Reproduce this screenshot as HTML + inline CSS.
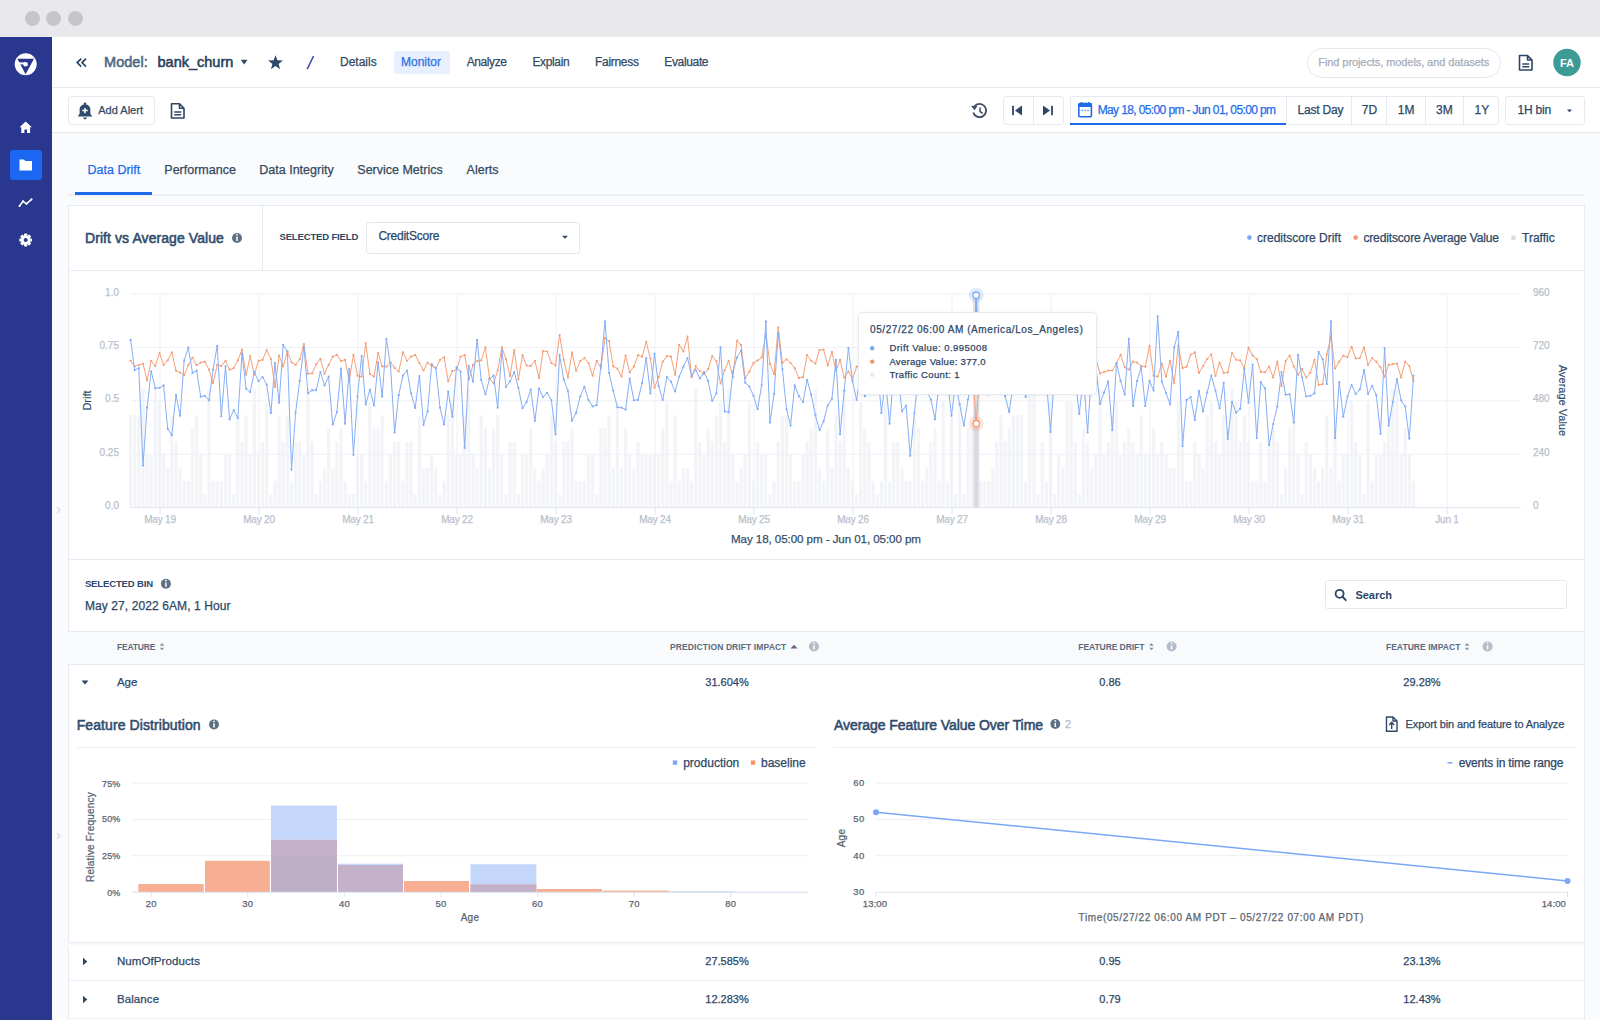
<!DOCTYPE html>
<html><head><meta charset="utf-8">
<style>
*{box-sizing:border-box;margin:0;padding:0}
html,body{width:1600px;height:1020px;overflow:hidden;background:#fafbfc;font-family:"Liberation Sans",sans-serif;color:#2d4767}
.a{position:absolute}
.t{position:absolute;line-height:1;white-space:nowrap;-webkit-text-stroke:0.25px currentColor}
.b{font-weight:700;-webkit-text-stroke:0}
.md{-webkit-text-stroke:0.55px currentColor}
svg{position:absolute;overflow:visible}
</style></head><body>
<!-- browser chrome -->
<div class="a" style="left:0;top:0;width:1600px;height:37px;background:#e9e9eb"></div>
<div class="a" style="left:25px;top:11px;width:15px;height:15px;border-radius:50%;background:#c6c6c8"></div>
<div class="a" style="left:46px;top:11px;width:15px;height:15px;border-radius:50%;background:#c6c6c8"></div>
<div class="a" style="left:68px;top:11px;width:15px;height:15px;border-radius:50%;background:#c6c6c8"></div>

<!-- sidebar -->
<div class="a" style="left:0;top:37px;width:52px;height:983px;background:#29378e"></div>
<!-- HEADER -->
<div class="a" style="left:52px;top:37px;width:1548px;height:51px;background:#fff;border-bottom:1px solid #e4e8ef"></div>
<!-- TOOLBAR -->
<div class="a" style="left:52px;top:88px;width:1548px;height:45px;background:#fff;border-bottom:1px solid #e4e8ef"></div>

<!-- TABS -->
<div class="a" style="left:68px;top:193.5px;width:1516px;height:2px;background:#eceef3"></div>
<div class="a" style="left:75px;top:192px;width:77px;height:3px;background:#1f6bea"></div>


<!-- sidebar icons -->
<svg style="left:0;top:0" width="52" height="260" viewBox="0 0 52 260">
 <circle cx="25.7" cy="64.2" r="11" fill="#fff"/>
 <path d="M17.4 58.8 H34 L25.6 74.2 Z" fill="#29378e"/>
 <path d="M18.6 63.4 H25.6" stroke="#fff" stroke-width="2"/>
 <circle cx="25.6" cy="64.3" r="2.3" fill="#fff"/>
 <path d="M25.7 121.5 L19.5 127.3 H21.3 V133 H24.4 V129.4 H27 V133 H30.1 V127.3 H31.9 Z" fill="#fff"/>
 <rect x="10" y="150" width="32" height="30" rx="3" fill="#1b67f1"/>
 <path d="M19.5 159.6 H24 L25.5 161 H32 V170.4 H19.5 Z" fill="#fff"/>
 <path d="M19.5 206 L23 201.3 L26.5 203.8 L31.5 199.3" stroke="#fff" stroke-width="1.6" fill="none"/>
 <circle cx="19.5" cy="206" r="1.1" fill="#fff"/><circle cx="23" cy="201.3" r="1.1" fill="#fff"/><circle cx="26.5" cy="203.8" r="1.1" fill="#fff"/><circle cx="31.5" cy="199.3" r="1.1" fill="#fff"/>
 <g transform="translate(25.7 240)" fill="#fff">
  <circle r="4.6"/>
  <rect x="-1.6" y="-6.4" width="3.2" height="12.8" rx="0.6"/>
  <rect x="-1.6" y="-6.4" width="3.2" height="12.8" rx="0.6" transform="rotate(45)"/>
  <rect x="-1.6" y="-6.4" width="3.2" height="12.8" rx="0.6" transform="rotate(90)"/>
  <rect x="-1.6" y="-6.4" width="3.2" height="12.8" rx="0.6" transform="rotate(135)"/>
 </g>
 <circle cx="25.7" cy="240" r="2" fill="#29378e"/>
</svg>

<!-- header content -->
<svg style="left:0;top:0" width="1600" height="140" viewBox="0 0 1600 140">
 <path d="M81.2 58.6 L77.2 62.6 L81.2 66.6 M86 58.6 L82 62.6 L86 66.6" stroke="#2d4767" stroke-width="1.7" fill="none"/>
 <path d="M240.8 59.8 H247.6 L244.2 64.4 Z" fill="#2d4767"/>
 <path d="M275.5 55.2 L277.4 60.3 L282.9 60.5 L278.6 63.9 L280.1 69.2 L275.5 66.1 L270.9 69.2 L272.4 63.9 L268.1 60.5 L273.6 60.3 Z" fill="#2c4a6b"/>
 <path d="M313.6 56 L307.2 69.2" stroke="#3b45a8" stroke-width="1.5"/>
 <!-- doc icon header -->
 <path d="M1519.5 55.5 H1527.5 L1532 60 V70 H1519.5 Z M1527.5 55.5 V60 H1532" stroke="#2d4767" stroke-width="1.6" fill="none" stroke-linejoin="round"/>
 <path d="M1522.3 64 H1529.2 M1522.3 66.8 H1529.2" stroke="#2d4767" stroke-width="1.4"/>
 <circle cx="1567" cy="62.5" r="13.7" fill="#3d9a94"/>
 <!-- toolbar: bell -->
 <path d="M77.8 116.6 H92.2 L90.4 113.8 V110.2 C90.4 106.7 88.4 104.5 85 104.3 C81.6 104.5 79.6 106.7 79.6 110.2 V113.8 Z" fill="#2c4a6b"/>
 <circle cx="85" cy="103.8" r="1.3" fill="#2c4a6b"/>
 <path d="M83.2 117.6 A1.8 1.8 0 0 0 86.8 117.6 Z" fill="#2c4a6b"/>
 <path d="M85 107.9 V113.3 M82.3 110.6 H87.7" stroke="#fff" stroke-width="1.5"/>
 <!-- toolbar doc -->
 <path d="M171.5 103.8 H179.5 L184 108.3 V118 H171.5 Z M179.5 103.8 V108.3 H184" stroke="#2d4767" stroke-width="1.6" fill="none" stroke-linejoin="round"/>
 <path d="M174.3 112 H181.2 M174.3 114.8 H181.2" stroke="#2d4767" stroke-width="1.4"/>
 <!-- history icon -->
 <path d="M974.3 106.5 A6.6 6.6 0 1 1 973.2 112.5" stroke="#3d4f63" stroke-width="1.8" fill="none"/>
 <path d="M971 106 L974.6 110.2 L977.6 105.8 Z" fill="#3d4f63"/>
 <path d="M980 107.5 V111.5 L982.8 113.3" stroke="#3d4f63" stroke-width="1.5" fill="none"/>
 <!-- prev/next -->
 <path d="M1013 105.7 V115.3" stroke="#2d4767" stroke-width="1.8"/>
 <path d="M1022 105.5 L1015 110.5 L1022 115.5 Z" fill="#2d4767"/>
 <path d="M1052 105.7 V115.3" stroke="#2d4767" stroke-width="1.8"/>
 <path d="M1043 105.5 L1050 110.5 L1043 115.5 Z" fill="#2d4767"/>
 <!-- calendar -->
 <rect x="1078.8" y="103.6" width="12.6" height="13.2" rx="1.2" stroke="#1f6bea" stroke-width="1.6" fill="none"/>
 <rect x="1078.8" y="103.6" width="12.6" height="3.4" fill="#1f6bea"/>
 <path d="M1081.5 102 V104.5 M1088.7 102 V104.5" stroke="#1f6bea" stroke-width="1.5"/>
 <path d="M1081.5 110.3 H1082.7 M1084.5 110.3 H1085.7 M1087.5 110.3 H1088.7" stroke="#1f6bea" stroke-width="1.3"/>
 <!-- 1H bin caret -->
 <path d="M1567 109.5 H1572 L1569.5 112.2 Z" fill="#2d4767"/>
</svg>
<div class="t md" style="left:104px;top:55px;font-size:14.5px;color:#4d6885;letter-spacing:0.05px">Model:</div>
<div class="t md" style="left:157.5px;top:55px;font-size:14.5px;color:#263f5d;letter-spacing:0px">bank_churn</div>
<div class="t" style="left:340px;top:56px;font-size:12px;color:#34495f">Details</div>
<div class="a" style="left:394px;top:51px;width:56px;height:23px;background:#e8f0fd;border-radius:3px"></div>
<div class="t" style="left:401px;top:56px;font-size:12px;color:#2f6fe4">Monitor</div>
<div class="t" style="left:466.7px;top:56px;font-size:12px;color:#34495f;letter-spacing:-0.4px">Analyze</div>
<div class="t" style="left:532.4px;top:56px;font-size:12px;color:#34495f;letter-spacing:-0.35px">Explain</div>
<div class="t" style="left:595px;top:56px;font-size:12px;color:#34495f;letter-spacing:-0.3px">Fairness</div>
<div class="t" style="left:664.3px;top:56px;font-size:12px;color:#34495f;letter-spacing:-0.35px">Evaluate</div>
<div class="a" style="left:1307px;top:48px;width:194px;height:30px;border:1px solid #e3e7ee;border-radius:15px"></div>
<div class="t" style="left:1318.3px;top:56.5px;font-size:11px;color:#a5aebb;letter-spacing:-0.08px">Find projects, models, and datasets</div>
<div class="t b" style="left:1556px;top:57.5px;font-size:11px;color:#fff;width:22px;text-align:center">FA</div>

<div class="a" style="left:68px;top:96px;width:87px;height:29px;border:1px solid #e6e9ef;border-radius:3px"></div>
<div class="t" style="left:98.2px;top:104.5px;font-size:11px;color:#2d4767;letter-spacing:0.02px">Add Alert</div>
<div class="a" style="left:1002.5px;top:96.4px;width:61px;height:28.5px;border:1px solid #e6e9ef;border-radius:3px"></div>
<div class="a" style="left:1032.5px;top:96.4px;width:1px;height:28.5px;background:#e6e9ef"></div>
<div class="a" style="left:1070px;top:96.4px;width:429px;height:28.5px;border:1px solid #e6e9ef;border-radius:3px"></div>
<div class="a" style="left:1070px;top:122.5px;width:216px;height:2.2px;background:#1f6bea"></div>
<div class="a" style="left:1286px;top:96.4px;width:1px;height:28.5px;background:#e6e9ef"></div>
<div class="a" style="left:1350.5px;top:96.4px;width:1px;height:28.5px;background:#e6e9ef"></div>
<div class="a" style="left:1386px;top:96.4px;width:1px;height:28.5px;background:#e6e9ef"></div>
<div class="a" style="left:1424.5px;top:96.4px;width:1px;height:28.5px;background:#e6e9ef"></div>
<div class="a" style="left:1463px;top:96.4px;width:1px;height:28.5px;background:#e6e9ef"></div>
<div class="a" style="left:1505px;top:96.4px;width:79.5px;height:28.5px;border:1px solid #e6e9ef;border-radius:3px"></div>
<div class="t" style="left:1097.7px;top:104px;font-size:12px;color:#1f6bea;letter-spacing:-0.62px">May 18, 05:00 pm - Jun 01, 05:00 pm</div>
<div class="t" style="left:1297.5px;top:104px;font-size:12px;color:#2d4767;letter-spacing:-0.2px">Last Day</div>
<div class="t" style="left:1361.8px;top:104px;font-size:12px;color:#2d4767">7D</div>
<div class="t" style="left:1397.8px;top:104px;font-size:12px;color:#2d4767">1M</div>
<div class="t" style="left:1436px;top:104px;font-size:12px;color:#2d4767">3M</div>
<div class="t" style="left:1474.5px;top:104px;font-size:12px;color:#2d4767">1Y</div>
<div class="t" style="left:1517.5px;top:104px;font-size:12px;color:#2d4767;letter-spacing:-0.2px">1H bin</div>

<!-- tabs text -->
<div class="t" style="left:87.5px;top:163.7px;font-size:12.5px;color:#1f6bea">Data Drift</div>
<div class="t" style="left:164.3px;top:163.7px;font-size:12.5px;color:#34495f">Performance</div>
<div class="t" style="left:259.3px;top:163.7px;font-size:12.5px;color:#34495f">Data Integrity</div>
<div class="t" style="left:357.3px;top:163.7px;font-size:12.5px;color:#34495f">Service Metrics</div>
<div class="t" style="left:466.6px;top:163.7px;font-size:12.5px;color:#34495f">Alerts</div>

<!-- MAIN CARD -->
<div class="a" style="left:68px;top:205px;width:1516.5px;height:830px;background:#fff;border:1px solid #e8ebf2"></div>
<div class="a" style="left:68px;top:270px;width:1516px;height:1px;background:#e8ebf2"></div>
<div class="a" style="left:262px;top:205px;width:1px;height:65px;background:#e8ebf2"></div>
<div class="t md" style="left:85px;top:230.6px;font-size:14px;color:#2f4b6c;letter-spacing:0.08px">Drift vs Average Value</div>
<div class="t b" style="left:279.5px;top:232.3px;font-size:9.5px;color:#2d4767;letter-spacing:-0.15px">SELECTED FIELD</div>
<div class="a" style="left:366px;top:222px;width:214px;height:31.5px;border:1px solid #e3e7ee;border-radius:3px"></div>
<div class="t" style="left:378.4px;top:230px;font-size:12px;color:#2d4767;letter-spacing:-0.24px">CreditScore</div>
<div class="t" style="left:1257px;top:231.5px;font-size:12px;color:#2d4767">creditscore Drift</div>
<div class="t" style="left:1363.4px;top:231.5px;font-size:12px;color:#2d4767;letter-spacing:-0.14px">creditscore Average Value</div>
<div class="t" style="left:1522px;top:231.5px;font-size:12px;color:#2d4767">Traffic</div>
<svg style="left:0;top:0" width="1600" height="1020" viewBox="0 0 1600 1020">
<g fill="#f3f4f7"><rect x="129.0" y="415.2" width="3.2" height="92.4"/><rect x="133.1" y="415.2" width="3.2" height="92.4"/><rect x="137.2" y="415.2" width="3.2" height="92.4"/><rect x="141.4" y="388.8" width="3.2" height="118.8"/><rect x="145.5" y="454.8" width="3.2" height="52.8"/><rect x="149.6" y="454.8" width="3.2" height="52.8"/><rect x="153.8" y="388.8" width="3.2" height="118.8"/><rect x="157.9" y="402.0" width="3.2" height="105.6"/><rect x="162.0" y="454.8" width="3.2" height="52.8"/><rect x="166.1" y="468.0" width="3.2" height="39.6"/><rect x="170.2" y="415.2" width="3.2" height="92.4"/><rect x="174.4" y="441.6" width="3.2" height="66.0"/><rect x="178.5" y="468.0" width="3.2" height="39.6"/><rect x="182.6" y="481.2" width="3.2" height="26.4"/><rect x="186.8" y="481.2" width="3.2" height="26.4"/><rect x="190.9" y="428.4" width="3.2" height="79.2"/><rect x="195.0" y="415.2" width="3.2" height="92.4"/><rect x="199.1" y="454.8" width="3.2" height="52.8"/><rect x="203.2" y="494.4" width="3.2" height="13.2"/><rect x="207.4" y="388.8" width="3.2" height="118.8"/><rect x="211.5" y="481.2" width="3.2" height="26.4"/><rect x="215.6" y="481.2" width="3.2" height="26.4"/><rect x="219.8" y="481.2" width="3.2" height="26.4"/><rect x="223.9" y="454.8" width="3.2" height="52.8"/><rect x="228.0" y="454.8" width="3.2" height="52.8"/><rect x="232.1" y="494.4" width="3.2" height="13.2"/><rect x="236.2" y="415.2" width="3.2" height="92.4"/><rect x="240.4" y="441.6" width="3.2" height="66.0"/><rect x="244.5" y="415.2" width="3.2" height="92.4"/><rect x="248.6" y="454.8" width="3.2" height="52.8"/><rect x="252.8" y="388.8" width="3.2" height="118.8"/><rect x="256.9" y="454.8" width="3.2" height="52.8"/><rect x="261.0" y="441.6" width="3.2" height="66.0"/><rect x="265.1" y="402.0" width="3.2" height="105.6"/><rect x="269.2" y="494.4" width="3.2" height="13.2"/><rect x="273.4" y="481.2" width="3.2" height="26.4"/><rect x="277.5" y="415.2" width="3.2" height="92.4"/><rect x="281.6" y="441.6" width="3.2" height="66.0"/><rect x="285.8" y="415.2" width="3.2" height="92.4"/><rect x="289.9" y="481.2" width="3.2" height="26.4"/><rect x="294.0" y="441.6" width="3.2" height="66.0"/><rect x="298.1" y="441.6" width="3.2" height="66.0"/><rect x="302.2" y="454.8" width="3.2" height="52.8"/><rect x="306.4" y="388.8" width="3.2" height="118.8"/><rect x="310.5" y="441.6" width="3.2" height="66.0"/><rect x="314.6" y="494.4" width="3.2" height="13.2"/><rect x="318.8" y="481.2" width="3.2" height="26.4"/><rect x="322.9" y="468.0" width="3.2" height="39.6"/><rect x="327.0" y="428.4" width="3.2" height="79.2"/><rect x="331.1" y="468.0" width="3.2" height="39.6"/><rect x="335.2" y="441.6" width="3.2" height="66.0"/><rect x="339.4" y="428.4" width="3.2" height="79.2"/><rect x="343.5" y="481.2" width="3.2" height="26.4"/><rect x="347.6" y="494.4" width="3.2" height="13.2"/><rect x="351.8" y="494.4" width="3.2" height="13.2"/><rect x="355.9" y="454.8" width="3.2" height="52.8"/><rect x="360.0" y="454.8" width="3.2" height="52.8"/><rect x="364.1" y="481.2" width="3.2" height="26.4"/><rect x="368.2" y="402.0" width="3.2" height="105.6"/><rect x="372.4" y="428.4" width="3.2" height="79.2"/><rect x="376.5" y="428.4" width="3.2" height="79.2"/><rect x="380.6" y="415.2" width="3.2" height="92.4"/><rect x="384.8" y="481.2" width="3.2" height="26.4"/><rect x="388.9" y="454.8" width="3.2" height="52.8"/><rect x="393.0" y="441.6" width="3.2" height="66.0"/><rect x="397.1" y="441.6" width="3.2" height="66.0"/><rect x="401.2" y="481.2" width="3.2" height="26.4"/><rect x="405.4" y="441.6" width="3.2" height="66.0"/><rect x="409.5" y="441.6" width="3.2" height="66.0"/><rect x="413.6" y="494.4" width="3.2" height="13.2"/><rect x="417.8" y="415.2" width="3.2" height="92.4"/><rect x="421.9" y="468.0" width="3.2" height="39.6"/><rect x="426.0" y="468.0" width="3.2" height="39.6"/><rect x="430.1" y="454.8" width="3.2" height="52.8"/><rect x="434.2" y="468.0" width="3.2" height="39.6"/><rect x="438.4" y="494.4" width="3.2" height="13.2"/><rect x="442.5" y="481.2" width="3.2" height="26.4"/><rect x="446.6" y="415.2" width="3.2" height="92.4"/><rect x="450.8" y="402.0" width="3.2" height="105.6"/><rect x="454.9" y="454.8" width="3.2" height="52.8"/><rect x="459.0" y="454.8" width="3.2" height="52.8"/><rect x="463.1" y="415.2" width="3.2" height="92.4"/><rect x="467.2" y="388.8" width="3.2" height="118.8"/><rect x="471.4" y="454.8" width="3.2" height="52.8"/><rect x="475.5" y="468.0" width="3.2" height="39.6"/><rect x="479.6" y="415.2" width="3.2" height="92.4"/><rect x="483.8" y="428.4" width="3.2" height="79.2"/><rect x="487.9" y="468.0" width="3.2" height="39.6"/><rect x="492.0" y="428.4" width="3.2" height="79.2"/><rect x="496.1" y="415.2" width="3.2" height="92.4"/><rect x="500.2" y="454.8" width="3.2" height="52.8"/><rect x="504.4" y="494.4" width="3.2" height="13.2"/><rect x="508.5" y="441.6" width="3.2" height="66.0"/><rect x="512.6" y="441.6" width="3.2" height="66.0"/><rect x="516.8" y="494.4" width="3.2" height="13.2"/><rect x="520.9" y="454.8" width="3.2" height="52.8"/><rect x="525.0" y="454.8" width="3.2" height="52.8"/><rect x="529.1" y="428.4" width="3.2" height="79.2"/><rect x="533.2" y="468.0" width="3.2" height="39.6"/><rect x="537.4" y="481.2" width="3.2" height="26.4"/><rect x="541.5" y="468.0" width="3.2" height="39.6"/><rect x="545.6" y="454.8" width="3.2" height="52.8"/><rect x="549.8" y="415.2" width="3.2" height="92.4"/><rect x="553.9" y="441.6" width="3.2" height="66.0"/><rect x="558.0" y="494.4" width="3.2" height="13.2"/><rect x="562.1" y="441.6" width="3.2" height="66.0"/><rect x="566.2" y="441.6" width="3.2" height="66.0"/><rect x="570.4" y="428.4" width="3.2" height="79.2"/><rect x="574.5" y="481.2" width="3.2" height="26.4"/><rect x="578.6" y="481.2" width="3.2" height="26.4"/><rect x="582.8" y="481.2" width="3.2" height="26.4"/><rect x="586.9" y="454.8" width="3.2" height="52.8"/><rect x="591.0" y="454.8" width="3.2" height="52.8"/><rect x="595.1" y="494.4" width="3.2" height="13.2"/><rect x="599.2" y="428.4" width="3.2" height="79.2"/><rect x="603.4" y="428.4" width="3.2" height="79.2"/><rect x="607.5" y="415.2" width="3.2" height="92.4"/><rect x="611.6" y="468.0" width="3.2" height="39.6"/><rect x="615.8" y="402.0" width="3.2" height="105.6"/><rect x="619.9" y="468.0" width="3.2" height="39.6"/><rect x="624.0" y="428.4" width="3.2" height="79.2"/><rect x="628.1" y="454.8" width="3.2" height="52.8"/><rect x="632.2" y="468.0" width="3.2" height="39.6"/><rect x="636.4" y="441.6" width="3.2" height="66.0"/><rect x="640.5" y="454.8" width="3.2" height="52.8"/><rect x="644.6" y="454.8" width="3.2" height="52.8"/><rect x="648.8" y="454.8" width="3.2" height="52.8"/><rect x="652.9" y="454.8" width="3.2" height="52.8"/><rect x="657.0" y="454.8" width="3.2" height="52.8"/><rect x="661.1" y="428.4" width="3.2" height="79.2"/><rect x="665.2" y="402.0" width="3.2" height="105.6"/><rect x="669.4" y="481.2" width="3.2" height="26.4"/><rect x="673.5" y="415.2" width="3.2" height="92.4"/><rect x="677.6" y="481.2" width="3.2" height="26.4"/><rect x="681.8" y="468.0" width="3.2" height="39.6"/><rect x="685.9" y="468.0" width="3.2" height="39.6"/><rect x="690.0" y="481.2" width="3.2" height="26.4"/><rect x="694.1" y="388.8" width="3.2" height="118.8"/><rect x="698.2" y="441.6" width="3.2" height="66.0"/><rect x="702.4" y="454.8" width="3.2" height="52.8"/><rect x="706.5" y="428.4" width="3.2" height="79.2"/><rect x="710.6" y="441.6" width="3.2" height="66.0"/><rect x="714.8" y="415.2" width="3.2" height="92.4"/><rect x="718.9" y="402.0" width="3.2" height="105.6"/><rect x="723.0" y="441.6" width="3.2" height="66.0"/><rect x="727.1" y="388.8" width="3.2" height="118.8"/><rect x="731.2" y="454.8" width="3.2" height="52.8"/><rect x="735.4" y="481.2" width="3.2" height="26.4"/><rect x="739.5" y="468.0" width="3.2" height="39.6"/><rect x="743.6" y="454.8" width="3.2" height="52.8"/><rect x="747.8" y="402.0" width="3.2" height="105.6"/><rect x="751.9" y="481.2" width="3.2" height="26.4"/><rect x="756.0" y="441.6" width="3.2" height="66.0"/><rect x="760.1" y="454.8" width="3.2" height="52.8"/><rect x="764.2" y="454.8" width="3.2" height="52.8"/><rect x="768.4" y="494.4" width="3.2" height="13.2"/><rect x="772.5" y="481.2" width="3.2" height="26.4"/><rect x="776.6" y="441.6" width="3.2" height="66.0"/><rect x="780.8" y="415.2" width="3.2" height="92.4"/><rect x="784.9" y="415.2" width="3.2" height="92.4"/><rect x="789.0" y="454.8" width="3.2" height="52.8"/><rect x="793.1" y="481.2" width="3.2" height="26.4"/><rect x="797.2" y="481.2" width="3.2" height="26.4"/><rect x="801.4" y="454.8" width="3.2" height="52.8"/><rect x="805.5" y="441.6" width="3.2" height="66.0"/><rect x="809.6" y="428.4" width="3.2" height="79.2"/><rect x="813.8" y="388.8" width="3.2" height="118.8"/><rect x="817.9" y="468.0" width="3.2" height="39.6"/><rect x="822.0" y="481.2" width="3.2" height="26.4"/><rect x="826.1" y="428.4" width="3.2" height="79.2"/><rect x="830.2" y="468.0" width="3.2" height="39.6"/><rect x="834.4" y="415.2" width="3.2" height="92.4"/><rect x="838.5" y="441.6" width="3.2" height="66.0"/><rect x="842.6" y="388.8" width="3.2" height="118.8"/><rect x="846.8" y="468.0" width="3.2" height="39.6"/><rect x="850.9" y="481.2" width="3.2" height="26.4"/><rect x="855.0" y="494.4" width="3.2" height="13.2"/><rect x="859.1" y="402.0" width="3.2" height="105.6"/><rect x="863.2" y="428.4" width="3.2" height="79.2"/><rect x="867.4" y="441.6" width="3.2" height="66.0"/><rect x="871.5" y="481.2" width="3.2" height="26.4"/><rect x="875.6" y="494.4" width="3.2" height="13.2"/><rect x="879.8" y="481.2" width="3.2" height="26.4"/><rect x="883.9" y="402.0" width="3.2" height="105.6"/><rect x="888.0" y="481.2" width="3.2" height="26.4"/><rect x="892.1" y="441.6" width="3.2" height="66.0"/><rect x="896.2" y="441.6" width="3.2" height="66.0"/><rect x="900.4" y="468.0" width="3.2" height="39.6"/><rect x="904.5" y="481.2" width="3.2" height="26.4"/><rect x="908.6" y="481.2" width="3.2" height="26.4"/><rect x="912.8" y="415.2" width="3.2" height="92.4"/><rect x="916.9" y="428.4" width="3.2" height="79.2"/><rect x="921.0" y="481.2" width="3.2" height="26.4"/><rect x="925.1" y="468.0" width="3.2" height="39.6"/><rect x="929.2" y="441.6" width="3.2" height="66.0"/><rect x="933.4" y="428.4" width="3.2" height="79.2"/><rect x="937.5" y="481.2" width="3.2" height="26.4"/><rect x="941.6" y="402.0" width="3.2" height="105.6"/><rect x="945.8" y="481.2" width="3.2" height="26.4"/><rect x="949.9" y="415.2" width="3.2" height="92.4"/><rect x="954.0" y="494.4" width="3.2" height="13.2"/><rect x="958.1" y="402.0" width="3.2" height="105.6"/><rect x="962.2" y="494.4" width="3.2" height="13.2"/><rect x="966.4" y="428.4" width="3.2" height="79.2"/><rect x="970.5" y="428.4" width="3.2" height="79.2"/><rect x="978.8" y="481.2" width="3.2" height="26.4"/><rect x="982.9" y="481.2" width="3.2" height="26.4"/><rect x="987.0" y="481.2" width="3.2" height="26.4"/><rect x="991.1" y="468.0" width="3.2" height="39.6"/><rect x="995.2" y="441.6" width="3.2" height="66.0"/><rect x="999.4" y="415.2" width="3.2" height="92.4"/><rect x="1003.5" y="441.6" width="3.2" height="66.0"/><rect x="1007.6" y="428.4" width="3.2" height="79.2"/><rect x="1011.8" y="415.2" width="3.2" height="92.4"/><rect x="1015.9" y="415.2" width="3.2" height="92.4"/><rect x="1020.0" y="415.2" width="3.2" height="92.4"/><rect x="1024.1" y="481.2" width="3.2" height="26.4"/><rect x="1028.2" y="388.8" width="3.2" height="118.8"/><rect x="1032.4" y="388.8" width="3.2" height="118.8"/><rect x="1036.5" y="494.4" width="3.2" height="13.2"/><rect x="1040.6" y="441.6" width="3.2" height="66.0"/><rect x="1044.8" y="481.2" width="3.2" height="26.4"/><rect x="1048.9" y="402.0" width="3.2" height="105.6"/><rect x="1053.0" y="494.4" width="3.2" height="13.2"/><rect x="1057.1" y="454.8" width="3.2" height="52.8"/><rect x="1061.2" y="468.0" width="3.2" height="39.6"/><rect x="1065.4" y="402.0" width="3.2" height="105.6"/><rect x="1069.5" y="402.0" width="3.2" height="105.6"/><rect x="1073.6" y="441.6" width="3.2" height="66.0"/><rect x="1077.8" y="494.4" width="3.2" height="13.2"/><rect x="1081.9" y="428.4" width="3.2" height="79.2"/><rect x="1086.0" y="441.6" width="3.2" height="66.0"/><rect x="1090.1" y="468.0" width="3.2" height="39.6"/><rect x="1094.2" y="454.8" width="3.2" height="52.8"/><rect x="1098.4" y="388.8" width="3.2" height="118.8"/><rect x="1102.5" y="454.8" width="3.2" height="52.8"/><rect x="1106.6" y="441.6" width="3.2" height="66.0"/><rect x="1110.8" y="415.2" width="3.2" height="92.4"/><rect x="1114.9" y="402.0" width="3.2" height="105.6"/><rect x="1119.0" y="454.8" width="3.2" height="52.8"/><rect x="1123.1" y="441.6" width="3.2" height="66.0"/><rect x="1127.2" y="428.4" width="3.2" height="79.2"/><rect x="1131.4" y="441.6" width="3.2" height="66.0"/><rect x="1135.5" y="454.8" width="3.2" height="52.8"/><rect x="1139.6" y="415.2" width="3.2" height="92.4"/><rect x="1143.8" y="454.8" width="3.2" height="52.8"/><rect x="1147.9" y="454.8" width="3.2" height="52.8"/><rect x="1152.0" y="428.4" width="3.2" height="79.2"/><rect x="1156.1" y="454.8" width="3.2" height="52.8"/><rect x="1160.2" y="441.6" width="3.2" height="66.0"/><rect x="1164.4" y="454.8" width="3.2" height="52.8"/><rect x="1168.5" y="468.0" width="3.2" height="39.6"/><rect x="1172.6" y="468.0" width="3.2" height="39.6"/><rect x="1176.8" y="402.0" width="3.2" height="105.6"/><rect x="1180.9" y="428.4" width="3.2" height="79.2"/><rect x="1185.0" y="481.2" width="3.2" height="26.4"/><rect x="1189.1" y="481.2" width="3.2" height="26.4"/><rect x="1193.2" y="441.6" width="3.2" height="66.0"/><rect x="1197.4" y="454.8" width="3.2" height="52.8"/><rect x="1201.5" y="468.0" width="3.2" height="39.6"/><rect x="1205.6" y="415.2" width="3.2" height="92.4"/><rect x="1209.8" y="402.0" width="3.2" height="105.6"/><rect x="1213.9" y="441.6" width="3.2" height="66.0"/><rect x="1218.0" y="454.8" width="3.2" height="52.8"/><rect x="1222.1" y="415.2" width="3.2" height="92.4"/><rect x="1226.2" y="428.4" width="3.2" height="79.2"/><rect x="1230.4" y="388.8" width="3.2" height="118.8"/><rect x="1234.5" y="402.0" width="3.2" height="105.6"/><rect x="1238.6" y="441.6" width="3.2" height="66.0"/><rect x="1242.8" y="415.2" width="3.2" height="92.4"/><rect x="1246.9" y="441.6" width="3.2" height="66.0"/><rect x="1251.0" y="481.2" width="3.2" height="26.4"/><rect x="1255.1" y="481.2" width="3.2" height="26.4"/><rect x="1259.2" y="441.6" width="3.2" height="66.0"/><rect x="1263.4" y="481.2" width="3.2" height="26.4"/><rect x="1267.5" y="441.6" width="3.2" height="66.0"/><rect x="1271.6" y="428.4" width="3.2" height="79.2"/><rect x="1275.8" y="441.6" width="3.2" height="66.0"/><rect x="1279.9" y="494.4" width="3.2" height="13.2"/><rect x="1284.0" y="468.0" width="3.2" height="39.6"/><rect x="1288.1" y="428.4" width="3.2" height="79.2"/><rect x="1292.2" y="415.2" width="3.2" height="92.4"/><rect x="1296.4" y="454.8" width="3.2" height="52.8"/><rect x="1300.5" y="494.4" width="3.2" height="13.2"/><rect x="1304.6" y="441.6" width="3.2" height="66.0"/><rect x="1308.8" y="454.8" width="3.2" height="52.8"/><rect x="1312.9" y="468.0" width="3.2" height="39.6"/><rect x="1317.0" y="481.2" width="3.2" height="26.4"/><rect x="1321.1" y="468.0" width="3.2" height="39.6"/><rect x="1325.2" y="415.2" width="3.2" height="92.4"/><rect x="1329.4" y="468.0" width="3.2" height="39.6"/><rect x="1333.5" y="428.4" width="3.2" height="79.2"/><rect x="1337.6" y="481.2" width="3.2" height="26.4"/><rect x="1341.8" y="454.8" width="3.2" height="52.8"/><rect x="1345.9" y="454.8" width="3.2" height="52.8"/><rect x="1350.0" y="402.0" width="3.2" height="105.6"/><rect x="1354.1" y="441.6" width="3.2" height="66.0"/><rect x="1358.2" y="454.8" width="3.2" height="52.8"/><rect x="1362.4" y="494.4" width="3.2" height="13.2"/><rect x="1366.5" y="402.0" width="3.2" height="105.6"/><rect x="1370.6" y="481.2" width="3.2" height="26.4"/><rect x="1374.8" y="454.8" width="3.2" height="52.8"/><rect x="1378.9" y="454.8" width="3.2" height="52.8"/><rect x="1383.0" y="441.6" width="3.2" height="66.0"/><rect x="1387.1" y="428.4" width="3.2" height="79.2"/><rect x="1391.2" y="388.8" width="3.2" height="118.8"/><rect x="1395.4" y="388.8" width="3.2" height="118.8"/><rect x="1399.5" y="454.8" width="3.2" height="52.8"/><rect x="1403.6" y="428.4" width="3.2" height="79.2"/><rect x="1407.8" y="454.8" width="3.2" height="52.8"/><rect x="1411.9" y="481.2" width="3.2" height="26.4"/></g>
<path d="M131 294.00 H1521" stroke="#eef0f6" stroke-width="1"/>
<path d="M131 347.40 H1521" stroke="#eef0f6" stroke-width="1"/>
<path d="M131 400.80 H1521" stroke="#eef0f6" stroke-width="1"/>
<path d="M131 454.20 H1521" stroke="#eef0f6" stroke-width="1"/>
<path d="M160.0 294 V507.6" stroke="#eef0f6" stroke-width="1"/>
<path d="M160.0 507.6 V514.5" stroke="#dfe4ee" stroke-width="1"/>
<path d="M259.0 294 V507.6" stroke="#eef0f6" stroke-width="1"/>
<path d="M259.0 507.6 V514.5" stroke="#dfe4ee" stroke-width="1"/>
<path d="M358.0 294 V507.6" stroke="#eef0f6" stroke-width="1"/>
<path d="M358.0 507.6 V514.5" stroke="#dfe4ee" stroke-width="1"/>
<path d="M457.0 294 V507.6" stroke="#eef0f6" stroke-width="1"/>
<path d="M457.0 507.6 V514.5" stroke="#dfe4ee" stroke-width="1"/>
<path d="M556.0 294 V507.6" stroke="#eef0f6" stroke-width="1"/>
<path d="M556.0 507.6 V514.5" stroke="#dfe4ee" stroke-width="1"/>
<path d="M655.0 294 V507.6" stroke="#eef0f6" stroke-width="1"/>
<path d="M655.0 507.6 V514.5" stroke="#dfe4ee" stroke-width="1"/>
<path d="M754.0 294 V507.6" stroke="#eef0f6" stroke-width="1"/>
<path d="M754.0 507.6 V514.5" stroke="#dfe4ee" stroke-width="1"/>
<path d="M853.0 294 V507.6" stroke="#eef0f6" stroke-width="1"/>
<path d="M853.0 507.6 V514.5" stroke="#dfe4ee" stroke-width="1"/>
<path d="M952.0 294 V507.6" stroke="#eef0f6" stroke-width="1"/>
<path d="M952.0 507.6 V514.5" stroke="#dfe4ee" stroke-width="1"/>
<path d="M1051.0 294 V507.6" stroke="#eef0f6" stroke-width="1"/>
<path d="M1051.0 507.6 V514.5" stroke="#dfe4ee" stroke-width="1"/>
<path d="M1150.0 294 V507.6" stroke="#eef0f6" stroke-width="1"/>
<path d="M1150.0 507.6 V514.5" stroke="#dfe4ee" stroke-width="1"/>
<path d="M1249.0 294 V507.6" stroke="#eef0f6" stroke-width="1"/>
<path d="M1249.0 507.6 V514.5" stroke="#dfe4ee" stroke-width="1"/>
<path d="M1348.0 294 V507.6" stroke="#eef0f6" stroke-width="1"/>
<path d="M1348.0 507.6 V514.5" stroke="#dfe4ee" stroke-width="1"/>
<path d="M1447.0 294 V507.6" stroke="#eef0f6" stroke-width="1"/>
<path d="M1447.0 507.6 V514.5" stroke="#dfe4ee" stroke-width="1"/>
<path d="M131 507.6 H1521" stroke="#e1e6ef" stroke-width="1"/>
<rect x="973.0" y="294" width="6.4" height="213.6" fill="#e2e5ea"/>
<rect x="974.6" y="400" width="3.2" height="107.6" fill="#d6d9df"/>
<path d="M130.6 360.8 L134.7 366.4 L138.8 365.1 L143.0 363.6 L147.1 380.3 L151.2 360.8 L155.3 366.0 L159.5 353.0 L163.6 364.9 L167.7 360.4 L171.8 352.4 L176.0 370.6 L180.1 372.5 L184.2 375.3 L188.3 364.9 L192.5 357.6 L196.6 365.1 L200.7 362.6 L204.8 361.7 L209.0 369.7 L213.1 383.1 L217.2 364.9 L221.3 366.0 L225.5 360.8 L229.6 369.7 L233.7 368.2 L237.8 360.4 L242.0 349.6 L246.1 374.7 L250.2 356.1 L254.3 374.7 L258.5 360.8 L262.6 359.8 L266.7 350.0 L270.9 358.9 L275.0 386.9 L279.1 355.6 L283.2 366.4 L287.4 351.5 L291.5 362.3 L295.6 364.9 L299.7 359.3 L303.9 344.0 L308.0 373.8 L312.1 373.4 L316.2 364.1 L320.4 358.9 L324.5 373.8 L328.6 364.9 L332.7 356.7 L336.9 354.8 L341.0 361.1 L345.1 359.8 L349.2 381.3 L353.4 354.8 L357.5 375.7 L361.6 376.6 L365.7 343.1 L369.9 374.2 L374.0 376.6 L378.1 353.0 L382.2 366.4 L386.4 366.7 L390.5 362.3 L394.6 367.9 L398.7 371.6 L402.9 352.4 L407.0 360.8 L411.1 356.7 L415.2 354.8 L419.4 363.0 L423.5 370.5 L427.6 362.6 L431.7 366.0 L435.9 368.2 L440.0 359.8 L444.1 357.1 L448.2 381.3 L452.4 371.0 L456.5 369.7 L460.6 356.7 L464.7 355.2 L468.9 379.4 L473.0 364.9 L477.1 361.1 L481.2 360.4 L485.4 347.4 L489.5 378.5 L493.6 383.5 L497.7 370.5 L501.9 347.4 L506.0 359.3 L510.1 376.0 L514.2 350.0 L518.4 379.4 L522.5 355.2 L526.6 365.4 L530.7 366.0 L534.9 360.8 L539.0 377.9 L543.1 351.1 L547.2 351.5 L551.4 363.0 L555.5 365.4 L559.6 335.1 L563.7 359.8 L567.9 377.5 L572.0 352.4 L576.1 371.0 L580.2 361.1 L584.4 358.0 L588.5 363.0 L592.6 375.7 L596.7 360.8 L600.9 367.9 L605.0 338.1 L609.1 341.2 L613.2 366.4 L617.4 368.6 L621.5 376.6 L625.6 355.6 L629.7 372.3 L633.9 366.4 L638.0 355.2 L642.1 356.7 L646.2 341.8 L650.4 358.5 L654.5 387.8 L658.6 377.2 L662.7 361.7 L666.9 356.1 L671.0 356.7 L675.1 374.7 L679.2 344.9 L683.4 351.5 L687.5 336.6 L691.6 377.2 L695.7 366.0 L699.9 371.0 L704.0 374.2 L708.1 369.2 L712.2 356.1 L716.4 361.1 L720.5 383.5 L724.6 370.1 L728.7 360.8 L732.9 377.2 L737.0 340.7 L741.1 344.9 L745.2 378.5 L749.4 371.6 L753.5 363.0 L757.6 360.4 L761.7 357.4 L765.9 334.7 L770.0 364.1 L774.1 374.2 L778.2 327.3 L782.4 363.0 L786.5 359.3 L790.6 363.0 L794.7 368.2 L798.9 377.9 L803.0 377.2 L807.1 355.2 L811.2 360.8 L815.4 363.6 L819.5 350.0 L823.6 349.6 L827.7 365.4 L831.9 351.8 L836.0 371.0 L840.1 359.8 L844.2 377.5 L848.4 371.6 L852.5 379.0 L856.6 366.7 L860.7 364.5 L864.9 364.5 L869.0 364.5 L873.1 364.5 L877.2 364.5 L881.4 364.5 L885.5 364.5 L889.6 364.5 L893.7 364.5 L897.9 364.5 L902.0 364.5 L906.1 364.5 L910.2 364.5 L914.4 364.5 L918.5 364.5 L922.6 364.5 L926.7 364.5 L930.9 364.5 L935.0 364.5 L939.1 364.5 L943.2 364.5 L947.4 364.5 L951.5 364.5 L955.6 364.5 L959.7 364.5 L963.9 364.5 L968.0 364.5 L972.1 364.5 L976.2 423.7 L980.4 364.5 L984.5 364.5 L988.6 364.5 L992.7 364.5 L996.9 364.5 L1001.0 364.5 L1005.1 364.5 L1009.2 364.5 L1013.4 364.5 L1017.5 364.5 L1021.6 364.5 L1025.7 364.5 L1029.8 364.5 L1034.0 364.5 L1038.1 364.5 L1042.2 364.5 L1046.3 364.5 L1050.5 364.5 L1054.6 364.5 L1058.7 364.5 L1062.8 364.5 L1067.0 364.5 L1071.1 364.5 L1075.2 364.5 L1079.3 364.5 L1083.5 364.5 L1087.6 364.5 L1091.7 364.5 L1095.8 358.5 L1100.0 373.4 L1104.1 372.0 L1108.2 370.5 L1112.3 370.5 L1116.5 363.6 L1120.6 354.8 L1124.7 367.3 L1128.8 369.7 L1133.0 361.7 L1137.1 362.6 L1141.2 366.0 L1145.3 366.7 L1149.5 345.9 L1153.6 375.7 L1157.7 376.6 L1161.8 363.6 L1166.0 376.6 L1170.1 360.8 L1174.2 383.1 L1178.3 345.5 L1182.5 368.2 L1186.6 366.7 L1190.7 354.8 L1194.8 352.4 L1199.0 372.9 L1203.1 366.0 L1207.2 358.9 L1211.3 354.3 L1215.5 376.0 L1219.6 362.6 L1223.7 372.9 L1227.8 372.3 L1232.0 353.0 L1236.1 359.8 L1240.2 360.4 L1244.3 367.9 L1248.5 347.7 L1252.6 355.6 L1256.7 358.9 L1260.8 372.0 L1265.0 372.3 L1269.1 366.7 L1273.2 377.5 L1277.3 361.7 L1281.5 385.9 L1285.6 360.8 L1289.7 355.6 L1293.8 366.4 L1298.0 374.7 L1302.1 369.2 L1306.2 377.5 L1310.3 372.9 L1314.5 359.8 L1318.6 385.0 L1322.7 384.1 L1326.8 354.3 L1331.0 336.6 L1335.1 368.6 L1339.2 361.7 L1343.3 355.6 L1347.5 357.1 L1351.6 346.8 L1355.7 358.5 L1359.8 358.0 L1364.0 347.4 L1368.1 364.9 L1372.2 358.0 L1376.3 361.7 L1380.5 367.3 L1384.6 376.6 L1388.7 364.9 L1392.8 364.1 L1397.0 363.6 L1401.1 377.5 L1405.2 361.7 L1409.3 366.0 L1413.5 381.0" stroke="#f6a07a" stroke-width="1" fill="none" stroke-linejoin="round"/>
<g fill="#f59d76"><circle cx="130.6" cy="360.8" r="1.1"/><circle cx="134.7" cy="366.4" r="1.1"/><circle cx="138.8" cy="365.1" r="1.1"/><circle cx="143.0" cy="363.6" r="1.1"/><circle cx="147.1" cy="380.3" r="1.1"/><circle cx="151.2" cy="360.8" r="1.1"/><circle cx="155.3" cy="366.0" r="1.1"/><circle cx="159.5" cy="353.0" r="1.1"/><circle cx="163.6" cy="364.9" r="1.1"/><circle cx="167.7" cy="360.4" r="1.1"/><circle cx="171.8" cy="352.4" r="1.1"/><circle cx="176.0" cy="370.6" r="1.1"/><circle cx="180.1" cy="372.5" r="1.1"/><circle cx="184.2" cy="375.3" r="1.1"/><circle cx="188.3" cy="364.9" r="1.1"/><circle cx="192.5" cy="357.6" r="1.1"/><circle cx="196.6" cy="365.1" r="1.1"/><circle cx="200.7" cy="362.6" r="1.1"/><circle cx="204.8" cy="361.7" r="1.1"/><circle cx="209.0" cy="369.7" r="1.1"/><circle cx="213.1" cy="383.1" r="1.1"/><circle cx="217.2" cy="364.9" r="1.1"/><circle cx="221.3" cy="366.0" r="1.1"/><circle cx="225.5" cy="360.8" r="1.1"/><circle cx="229.6" cy="369.7" r="1.1"/><circle cx="233.7" cy="368.2" r="1.1"/><circle cx="237.8" cy="360.4" r="1.1"/><circle cx="242.0" cy="349.6" r="1.1"/><circle cx="246.1" cy="374.7" r="1.1"/><circle cx="250.2" cy="356.1" r="1.1"/><circle cx="254.3" cy="374.7" r="1.1"/><circle cx="258.5" cy="360.8" r="1.1"/><circle cx="262.6" cy="359.8" r="1.1"/><circle cx="266.7" cy="350.0" r="1.1"/><circle cx="270.9" cy="358.9" r="1.1"/><circle cx="275.0" cy="386.9" r="1.1"/><circle cx="279.1" cy="355.6" r="1.1"/><circle cx="283.2" cy="366.4" r="1.1"/><circle cx="287.4" cy="351.5" r="1.1"/><circle cx="291.5" cy="362.3" r="1.1"/><circle cx="295.6" cy="364.9" r="1.1"/><circle cx="299.7" cy="359.3" r="1.1"/><circle cx="303.9" cy="344.0" r="1.1"/><circle cx="308.0" cy="373.8" r="1.1"/><circle cx="312.1" cy="373.4" r="1.1"/><circle cx="316.2" cy="364.1" r="1.1"/><circle cx="320.4" cy="358.9" r="1.1"/><circle cx="324.5" cy="373.8" r="1.1"/><circle cx="328.6" cy="364.9" r="1.1"/><circle cx="332.7" cy="356.7" r="1.1"/><circle cx="336.9" cy="354.8" r="1.1"/><circle cx="341.0" cy="361.1" r="1.1"/><circle cx="345.1" cy="359.8" r="1.1"/><circle cx="349.2" cy="381.3" r="1.1"/><circle cx="353.4" cy="354.8" r="1.1"/><circle cx="357.5" cy="375.7" r="1.1"/><circle cx="361.6" cy="376.6" r="1.1"/><circle cx="365.7" cy="343.1" r="1.1"/><circle cx="369.9" cy="374.2" r="1.1"/><circle cx="374.0" cy="376.6" r="1.1"/><circle cx="378.1" cy="353.0" r="1.1"/><circle cx="382.2" cy="366.4" r="1.1"/><circle cx="386.4" cy="366.7" r="1.1"/><circle cx="390.5" cy="362.3" r="1.1"/><circle cx="394.6" cy="367.9" r="1.1"/><circle cx="398.7" cy="371.6" r="1.1"/><circle cx="402.9" cy="352.4" r="1.1"/><circle cx="407.0" cy="360.8" r="1.1"/><circle cx="411.1" cy="356.7" r="1.1"/><circle cx="415.2" cy="354.8" r="1.1"/><circle cx="419.4" cy="363.0" r="1.1"/><circle cx="423.5" cy="370.5" r="1.1"/><circle cx="427.6" cy="362.6" r="1.1"/><circle cx="431.7" cy="366.0" r="1.1"/><circle cx="435.9" cy="368.2" r="1.1"/><circle cx="440.0" cy="359.8" r="1.1"/><circle cx="444.1" cy="357.1" r="1.1"/><circle cx="448.2" cy="381.3" r="1.1"/><circle cx="452.4" cy="371.0" r="1.1"/><circle cx="456.5" cy="369.7" r="1.1"/><circle cx="460.6" cy="356.7" r="1.1"/><circle cx="464.7" cy="355.2" r="1.1"/><circle cx="468.9" cy="379.4" r="1.1"/><circle cx="473.0" cy="364.9" r="1.1"/><circle cx="477.1" cy="361.1" r="1.1"/><circle cx="481.2" cy="360.4" r="1.1"/><circle cx="485.4" cy="347.4" r="1.1"/><circle cx="489.5" cy="378.5" r="1.1"/><circle cx="493.6" cy="383.5" r="1.1"/><circle cx="497.7" cy="370.5" r="1.1"/><circle cx="501.9" cy="347.4" r="1.1"/><circle cx="506.0" cy="359.3" r="1.1"/><circle cx="510.1" cy="376.0" r="1.1"/><circle cx="514.2" cy="350.0" r="1.1"/><circle cx="518.4" cy="379.4" r="1.1"/><circle cx="522.5" cy="355.2" r="1.1"/><circle cx="526.6" cy="365.4" r="1.1"/><circle cx="530.7" cy="366.0" r="1.1"/><circle cx="534.9" cy="360.8" r="1.1"/><circle cx="539.0" cy="377.9" r="1.1"/><circle cx="543.1" cy="351.1" r="1.1"/><circle cx="547.2" cy="351.5" r="1.1"/><circle cx="551.4" cy="363.0" r="1.1"/><circle cx="555.5" cy="365.4" r="1.1"/><circle cx="559.6" cy="335.1" r="1.1"/><circle cx="563.7" cy="359.8" r="1.1"/><circle cx="567.9" cy="377.5" r="1.1"/><circle cx="572.0" cy="352.4" r="1.1"/><circle cx="576.1" cy="371.0" r="1.1"/><circle cx="580.2" cy="361.1" r="1.1"/><circle cx="584.4" cy="358.0" r="1.1"/><circle cx="588.5" cy="363.0" r="1.1"/><circle cx="592.6" cy="375.7" r="1.1"/><circle cx="596.7" cy="360.8" r="1.1"/><circle cx="600.9" cy="367.9" r="1.1"/><circle cx="605.0" cy="338.1" r="1.1"/><circle cx="609.1" cy="341.2" r="1.1"/><circle cx="613.2" cy="366.4" r="1.1"/><circle cx="617.4" cy="368.6" r="1.1"/><circle cx="621.5" cy="376.6" r="1.1"/><circle cx="625.6" cy="355.6" r="1.1"/><circle cx="629.7" cy="372.3" r="1.1"/><circle cx="633.9" cy="366.4" r="1.1"/><circle cx="638.0" cy="355.2" r="1.1"/><circle cx="642.1" cy="356.7" r="1.1"/><circle cx="646.2" cy="341.8" r="1.1"/><circle cx="650.4" cy="358.5" r="1.1"/><circle cx="654.5" cy="387.8" r="1.1"/><circle cx="658.6" cy="377.2" r="1.1"/><circle cx="662.7" cy="361.7" r="1.1"/><circle cx="666.9" cy="356.1" r="1.1"/><circle cx="671.0" cy="356.7" r="1.1"/><circle cx="675.1" cy="374.7" r="1.1"/><circle cx="679.2" cy="344.9" r="1.1"/><circle cx="683.4" cy="351.5" r="1.1"/><circle cx="687.5" cy="336.6" r="1.1"/><circle cx="691.6" cy="377.2" r="1.1"/><circle cx="695.7" cy="366.0" r="1.1"/><circle cx="699.9" cy="371.0" r="1.1"/><circle cx="704.0" cy="374.2" r="1.1"/><circle cx="708.1" cy="369.2" r="1.1"/><circle cx="712.2" cy="356.1" r="1.1"/><circle cx="716.4" cy="361.1" r="1.1"/><circle cx="720.5" cy="383.5" r="1.1"/><circle cx="724.6" cy="370.1" r="1.1"/><circle cx="728.7" cy="360.8" r="1.1"/><circle cx="732.9" cy="377.2" r="1.1"/><circle cx="737.0" cy="340.7" r="1.1"/><circle cx="741.1" cy="344.9" r="1.1"/><circle cx="745.2" cy="378.5" r="1.1"/><circle cx="749.4" cy="371.6" r="1.1"/><circle cx="753.5" cy="363.0" r="1.1"/><circle cx="757.6" cy="360.4" r="1.1"/><circle cx="761.7" cy="357.4" r="1.1"/><circle cx="765.9" cy="334.7" r="1.1"/><circle cx="770.0" cy="364.1" r="1.1"/><circle cx="774.1" cy="374.2" r="1.1"/><circle cx="778.2" cy="327.3" r="1.1"/><circle cx="782.4" cy="363.0" r="1.1"/><circle cx="786.5" cy="359.3" r="1.1"/><circle cx="790.6" cy="363.0" r="1.1"/><circle cx="794.7" cy="368.2" r="1.1"/><circle cx="798.9" cy="377.9" r="1.1"/><circle cx="803.0" cy="377.2" r="1.1"/><circle cx="807.1" cy="355.2" r="1.1"/><circle cx="811.2" cy="360.8" r="1.1"/><circle cx="815.4" cy="363.6" r="1.1"/><circle cx="819.5" cy="350.0" r="1.1"/><circle cx="823.6" cy="349.6" r="1.1"/><circle cx="827.7" cy="365.4" r="1.1"/><circle cx="831.9" cy="351.8" r="1.1"/><circle cx="836.0" cy="371.0" r="1.1"/><circle cx="840.1" cy="359.8" r="1.1"/><circle cx="844.2" cy="377.5" r="1.1"/><circle cx="848.4" cy="371.6" r="1.1"/><circle cx="852.5" cy="379.0" r="1.1"/><circle cx="856.6" cy="366.7" r="1.1"/><circle cx="860.7" cy="364.5" r="1.1"/><circle cx="864.9" cy="364.5" r="1.1"/><circle cx="869.0" cy="364.5" r="1.1"/><circle cx="873.1" cy="364.5" r="1.1"/><circle cx="877.2" cy="364.5" r="1.1"/><circle cx="881.4" cy="364.5" r="1.1"/><circle cx="885.5" cy="364.5" r="1.1"/><circle cx="889.6" cy="364.5" r="1.1"/><circle cx="893.7" cy="364.5" r="1.1"/><circle cx="897.9" cy="364.5" r="1.1"/><circle cx="902.0" cy="364.5" r="1.1"/><circle cx="906.1" cy="364.5" r="1.1"/><circle cx="910.2" cy="364.5" r="1.1"/><circle cx="914.4" cy="364.5" r="1.1"/><circle cx="918.5" cy="364.5" r="1.1"/><circle cx="922.6" cy="364.5" r="1.1"/><circle cx="926.7" cy="364.5" r="1.1"/><circle cx="930.9" cy="364.5" r="1.1"/><circle cx="935.0" cy="364.5" r="1.1"/><circle cx="939.1" cy="364.5" r="1.1"/><circle cx="943.2" cy="364.5" r="1.1"/><circle cx="947.4" cy="364.5" r="1.1"/><circle cx="951.5" cy="364.5" r="1.1"/><circle cx="955.6" cy="364.5" r="1.1"/><circle cx="959.7" cy="364.5" r="1.1"/><circle cx="963.9" cy="364.5" r="1.1"/><circle cx="968.0" cy="364.5" r="1.1"/><circle cx="972.1" cy="364.5" r="1.1"/><circle cx="976.2" cy="423.7" r="1.1"/><circle cx="980.4" cy="364.5" r="1.1"/><circle cx="984.5" cy="364.5" r="1.1"/><circle cx="988.6" cy="364.5" r="1.1"/><circle cx="992.7" cy="364.5" r="1.1"/><circle cx="996.9" cy="364.5" r="1.1"/><circle cx="1001.0" cy="364.5" r="1.1"/><circle cx="1005.1" cy="364.5" r="1.1"/><circle cx="1009.2" cy="364.5" r="1.1"/><circle cx="1013.4" cy="364.5" r="1.1"/><circle cx="1017.5" cy="364.5" r="1.1"/><circle cx="1021.6" cy="364.5" r="1.1"/><circle cx="1025.7" cy="364.5" r="1.1"/><circle cx="1029.8" cy="364.5" r="1.1"/><circle cx="1034.0" cy="364.5" r="1.1"/><circle cx="1038.1" cy="364.5" r="1.1"/><circle cx="1042.2" cy="364.5" r="1.1"/><circle cx="1046.3" cy="364.5" r="1.1"/><circle cx="1050.5" cy="364.5" r="1.1"/><circle cx="1054.6" cy="364.5" r="1.1"/><circle cx="1058.7" cy="364.5" r="1.1"/><circle cx="1062.8" cy="364.5" r="1.1"/><circle cx="1067.0" cy="364.5" r="1.1"/><circle cx="1071.1" cy="364.5" r="1.1"/><circle cx="1075.2" cy="364.5" r="1.1"/><circle cx="1079.3" cy="364.5" r="1.1"/><circle cx="1083.5" cy="364.5" r="1.1"/><circle cx="1087.6" cy="364.5" r="1.1"/><circle cx="1091.7" cy="364.5" r="1.1"/><circle cx="1095.8" cy="358.5" r="1.1"/><circle cx="1100.0" cy="373.4" r="1.1"/><circle cx="1104.1" cy="372.0" r="1.1"/><circle cx="1108.2" cy="370.5" r="1.1"/><circle cx="1112.3" cy="370.5" r="1.1"/><circle cx="1116.5" cy="363.6" r="1.1"/><circle cx="1120.6" cy="354.8" r="1.1"/><circle cx="1124.7" cy="367.3" r="1.1"/><circle cx="1128.8" cy="369.7" r="1.1"/><circle cx="1133.0" cy="361.7" r="1.1"/><circle cx="1137.1" cy="362.6" r="1.1"/><circle cx="1141.2" cy="366.0" r="1.1"/><circle cx="1145.3" cy="366.7" r="1.1"/><circle cx="1149.5" cy="345.9" r="1.1"/><circle cx="1153.6" cy="375.7" r="1.1"/><circle cx="1157.7" cy="376.6" r="1.1"/><circle cx="1161.8" cy="363.6" r="1.1"/><circle cx="1166.0" cy="376.6" r="1.1"/><circle cx="1170.1" cy="360.8" r="1.1"/><circle cx="1174.2" cy="383.1" r="1.1"/><circle cx="1178.3" cy="345.5" r="1.1"/><circle cx="1182.5" cy="368.2" r="1.1"/><circle cx="1186.6" cy="366.7" r="1.1"/><circle cx="1190.7" cy="354.8" r="1.1"/><circle cx="1194.8" cy="352.4" r="1.1"/><circle cx="1199.0" cy="372.9" r="1.1"/><circle cx="1203.1" cy="366.0" r="1.1"/><circle cx="1207.2" cy="358.9" r="1.1"/><circle cx="1211.3" cy="354.3" r="1.1"/><circle cx="1215.5" cy="376.0" r="1.1"/><circle cx="1219.6" cy="362.6" r="1.1"/><circle cx="1223.7" cy="372.9" r="1.1"/><circle cx="1227.8" cy="372.3" r="1.1"/><circle cx="1232.0" cy="353.0" r="1.1"/><circle cx="1236.1" cy="359.8" r="1.1"/><circle cx="1240.2" cy="360.4" r="1.1"/><circle cx="1244.3" cy="367.9" r="1.1"/><circle cx="1248.5" cy="347.7" r="1.1"/><circle cx="1252.6" cy="355.6" r="1.1"/><circle cx="1256.7" cy="358.9" r="1.1"/><circle cx="1260.8" cy="372.0" r="1.1"/><circle cx="1265.0" cy="372.3" r="1.1"/><circle cx="1269.1" cy="366.7" r="1.1"/><circle cx="1273.2" cy="377.5" r="1.1"/><circle cx="1277.3" cy="361.7" r="1.1"/><circle cx="1281.5" cy="385.9" r="1.1"/><circle cx="1285.6" cy="360.8" r="1.1"/><circle cx="1289.7" cy="355.6" r="1.1"/><circle cx="1293.8" cy="366.4" r="1.1"/><circle cx="1298.0" cy="374.7" r="1.1"/><circle cx="1302.1" cy="369.2" r="1.1"/><circle cx="1306.2" cy="377.5" r="1.1"/><circle cx="1310.3" cy="372.9" r="1.1"/><circle cx="1314.5" cy="359.8" r="1.1"/><circle cx="1318.6" cy="385.0" r="1.1"/><circle cx="1322.7" cy="384.1" r="1.1"/><circle cx="1326.8" cy="354.3" r="1.1"/><circle cx="1331.0" cy="336.6" r="1.1"/><circle cx="1335.1" cy="368.6" r="1.1"/><circle cx="1339.2" cy="361.7" r="1.1"/><circle cx="1343.3" cy="355.6" r="1.1"/><circle cx="1347.5" cy="357.1" r="1.1"/><circle cx="1351.6" cy="346.8" r="1.1"/><circle cx="1355.7" cy="358.5" r="1.1"/><circle cx="1359.8" cy="358.0" r="1.1"/><circle cx="1364.0" cy="347.4" r="1.1"/><circle cx="1368.1" cy="364.9" r="1.1"/><circle cx="1372.2" cy="358.0" r="1.1"/><circle cx="1376.3" cy="361.7" r="1.1"/><circle cx="1380.5" cy="367.3" r="1.1"/><circle cx="1384.6" cy="376.6" r="1.1"/><circle cx="1388.7" cy="364.9" r="1.1"/><circle cx="1392.8" cy="364.1" r="1.1"/><circle cx="1397.0" cy="363.6" r="1.1"/><circle cx="1401.1" cy="377.5" r="1.1"/><circle cx="1405.2" cy="361.7" r="1.1"/><circle cx="1409.3" cy="366.0" r="1.1"/><circle cx="1413.5" cy="381.0" r="1.1"/></g>
<path d="M130.6 339.9 L134.7 370.1 L138.8 368.2 L143.0 465.5 L147.1 407.7 L151.2 371.4 L155.3 388.2 L159.5 387.8 L163.6 385.4 L167.7 428.8 L171.8 435.3 L176.0 394.9 L180.1 415.7 L184.2 360.4 L188.3 347.7 L192.5 372.9 L196.6 370.5 L200.7 396.7 L204.8 395.8 L209.0 400.3 L213.1 369.7 L217.2 345.9 L221.3 416.3 L225.5 366.4 L229.6 419.4 L233.7 410.1 L237.8 418.1 L242.0 353.3 L246.1 388.7 L250.2 392.1 L254.3 372.0 L258.5 381.3 L262.6 377.0 L266.7 384.6 L270.9 412.9 L275.0 363.0 L279.1 402.7 L283.2 344.9 L287.4 351.5 L291.5 469.7 L295.6 412.6 L299.7 380.9 L303.9 346.8 L308.0 393.4 L312.1 390.2 L316.2 390.2 L320.4 372.0 L324.5 385.4 L328.6 376.6 L332.7 424.5 L336.9 412.0 L341.0 368.6 L345.1 423.7 L349.2 369.2 L353.4 454.8 L357.5 396.5 L361.6 356.1 L365.7 404.5 L369.9 389.6 L374.0 405.5 L378.1 362.3 L382.2 396.7 L386.4 338.8 L390.5 366.0 L394.6 432.5 L398.7 395.2 L402.9 375.7 L407.0 370.5 L411.1 393.4 L415.2 407.9 L419.4 376.0 L423.5 425.0 L427.6 411.4 L431.7 364.1 L435.9 368.2 L440.0 407.7 L444.1 424.5 L448.2 391.5 L452.4 416.7 L456.5 367.3 L460.6 371.6 L464.7 447.9 L468.9 366.0 L473.0 381.6 L477.1 339.9 L481.2 379.8 L485.4 394.3 L489.5 379.0 L493.6 375.7 L497.7 407.7 L501.9 350.5 L506.0 386.9 L510.1 381.3 L514.2 372.0 L518.4 387.8 L522.5 408.3 L526.6 402.1 L530.7 389.6 L534.9 420.8 L539.0 388.7 L543.1 397.1 L547.2 392.8 L551.4 400.3 L555.5 434.3 L559.6 354.8 L563.7 379.4 L567.9 390.6 L572.0 420.8 L576.1 412.9 L580.2 396.5 L584.4 386.9 L588.5 399.9 L592.6 406.4 L596.7 405.1 L600.9 365.4 L605.0 321.3 L609.1 372.9 L613.2 390.6 L617.4 407.3 L621.5 407.7 L625.6 409.6 L629.7 378.5 L633.9 400.3 L638.0 399.9 L642.1 383.1 L646.2 358.0 L650.4 393.4 L654.5 353.7 L658.6 385.9 L662.7 399.9 L666.9 377.2 L671.0 381.6 L675.1 391.5 L679.2 376.6 L683.4 366.7 L687.5 358.0 L691.6 376.0 L695.7 369.7 L699.9 378.5 L704.0 372.0 L708.1 380.9 L712.2 400.8 L716.4 393.4 L720.5 347.4 L724.6 411.4 L728.7 412.4 L732.9 371.6 L737.0 357.4 L741.1 350.5 L745.2 382.8 L749.4 386.5 L753.5 395.8 L757.6 409.2 L761.7 385.0 L765.9 321.3 L770.0 422.6 L774.1 393.9 L778.2 333.2 L782.4 369.2 L786.5 409.2 L790.6 425.6 L794.7 385.4 L798.9 396.2 L803.0 402.1 L807.1 379.8 L811.2 394.7 L815.4 415.2 L819.5 430.1 L823.6 421.3 L827.7 405.5 L831.9 399.0 L836.0 359.8 L840.1 434.3 L844.2 390.6 L848.4 348.1 L852.5 381.3 L856.6 399.9 L860.7 373.8 L864.9 396.2 L869.0 368.2 L873.1 379.4 L877.2 364.5 L881.4 412.9 L885.5 379.4 L889.6 423.7 L893.7 373.8 L897.9 373.8 L902.0 411.4 L906.1 405.5 L910.2 455.8 L914.4 413.3 L918.5 373.8 L922.6 383.1 L926.7 390.6 L930.9 399.5 L935.0 419.4 L939.1 383.1 L943.2 373.8 L947.4 379.4 L951.5 415.7 L955.6 383.1 L959.7 404.5 L963.9 425.6 L968.0 399.5 L972.1 379.4 L976.2 295.2 L980.4 373.8 L984.5 383.1 L988.6 394.3 L992.7 373.8 L996.9 379.4 L1001.0 383.1 L1005.1 396.2 L1009.2 412.0 L1013.4 383.1 L1017.5 379.4 L1021.6 373.8 L1025.7 397.1 L1029.8 379.4 L1034.0 383.1 L1038.1 373.8 L1042.2 383.1 L1046.3 379.4 L1050.5 431.9 L1054.6 373.8 L1058.7 379.4 L1062.8 383.1 L1067.0 373.8 L1071.1 383.1 L1075.2 379.4 L1079.3 413.9 L1083.5 375.7 L1087.6 432.5 L1091.7 368.2 L1095.8 366.4 L1100.0 404.0 L1104.1 392.4 L1108.2 381.3 L1112.3 430.1 L1116.5 363.0 L1120.6 380.9 L1124.7 394.7 L1128.8 338.8 L1133.0 405.9 L1137.1 380.9 L1141.2 367.3 L1145.3 405.9 L1149.5 380.9 L1153.6 390.6 L1157.7 316.4 L1161.8 381.6 L1166.0 392.8 L1170.1 404.5 L1174.2 347.4 L1178.3 331.9 L1182.5 446.1 L1186.6 399.9 L1190.7 397.1 L1194.8 420.0 L1199.0 390.9 L1203.1 411.4 L1207.2 392.4 L1211.3 375.7 L1215.5 390.6 L1219.6 408.3 L1223.7 382.8 L1227.8 439.0 L1232.0 401.8 L1236.1 412.6 L1240.2 408.8 L1244.3 369.2 L1248.5 402.7 L1252.6 364.5 L1256.7 438.1 L1260.8 382.2 L1265.0 388.3 L1269.1 445.0 L1273.2 424.1 L1277.3 406.4 L1281.5 372.0 L1285.6 394.7 L1289.7 394.3 L1293.8 422.6 L1298.0 354.8 L1302.1 377.5 L1306.2 396.5 L1310.3 395.8 L1314.5 393.4 L1318.6 351.8 L1322.7 359.3 L1326.8 384.1 L1331.0 321.3 L1335.1 438.1 L1339.2 382.2 L1343.3 416.7 L1347.5 396.5 L1351.6 385.0 L1355.7 393.9 L1359.8 389.6 L1364.0 370.1 L1368.1 393.9 L1372.2 385.9 L1376.3 395.2 L1380.5 433.8 L1384.6 348.1 L1388.7 425.6 L1392.8 401.8 L1397.0 379.0 L1401.1 400.3 L1405.2 406.4 L1409.3 438.7 L1413.5 375.5" stroke="#86aef6" stroke-width="1" fill="none" stroke-linejoin="round"/>
<g fill="#82acf6"><circle cx="130.6" cy="339.9" r="1.1"/><circle cx="134.7" cy="370.1" r="1.1"/><circle cx="138.8" cy="368.2" r="1.1"/><circle cx="143.0" cy="465.5" r="1.1"/><circle cx="147.1" cy="407.7" r="1.1"/><circle cx="151.2" cy="371.4" r="1.1"/><circle cx="155.3" cy="388.2" r="1.1"/><circle cx="159.5" cy="387.8" r="1.1"/><circle cx="163.6" cy="385.4" r="1.1"/><circle cx="167.7" cy="428.8" r="1.1"/><circle cx="171.8" cy="435.3" r="1.1"/><circle cx="176.0" cy="394.9" r="1.1"/><circle cx="180.1" cy="415.7" r="1.1"/><circle cx="184.2" cy="360.4" r="1.1"/><circle cx="188.3" cy="347.7" r="1.1"/><circle cx="192.5" cy="372.9" r="1.1"/><circle cx="196.6" cy="370.5" r="1.1"/><circle cx="200.7" cy="396.7" r="1.1"/><circle cx="204.8" cy="395.8" r="1.1"/><circle cx="209.0" cy="400.3" r="1.1"/><circle cx="213.1" cy="369.7" r="1.1"/><circle cx="217.2" cy="345.9" r="1.1"/><circle cx="221.3" cy="416.3" r="1.1"/><circle cx="225.5" cy="366.4" r="1.1"/><circle cx="229.6" cy="419.4" r="1.1"/><circle cx="233.7" cy="410.1" r="1.1"/><circle cx="237.8" cy="418.1" r="1.1"/><circle cx="242.0" cy="353.3" r="1.1"/><circle cx="246.1" cy="388.7" r="1.1"/><circle cx="250.2" cy="392.1" r="1.1"/><circle cx="254.3" cy="372.0" r="1.1"/><circle cx="258.5" cy="381.3" r="1.1"/><circle cx="262.6" cy="377.0" r="1.1"/><circle cx="266.7" cy="384.6" r="1.1"/><circle cx="270.9" cy="412.9" r="1.1"/><circle cx="275.0" cy="363.0" r="1.1"/><circle cx="279.1" cy="402.7" r="1.1"/><circle cx="283.2" cy="344.9" r="1.1"/><circle cx="287.4" cy="351.5" r="1.1"/><circle cx="291.5" cy="469.7" r="1.1"/><circle cx="295.6" cy="412.6" r="1.1"/><circle cx="299.7" cy="380.9" r="1.1"/><circle cx="303.9" cy="346.8" r="1.1"/><circle cx="308.0" cy="393.4" r="1.1"/><circle cx="312.1" cy="390.2" r="1.1"/><circle cx="316.2" cy="390.2" r="1.1"/><circle cx="320.4" cy="372.0" r="1.1"/><circle cx="324.5" cy="385.4" r="1.1"/><circle cx="328.6" cy="376.6" r="1.1"/><circle cx="332.7" cy="424.5" r="1.1"/><circle cx="336.9" cy="412.0" r="1.1"/><circle cx="341.0" cy="368.6" r="1.1"/><circle cx="345.1" cy="423.7" r="1.1"/><circle cx="349.2" cy="369.2" r="1.1"/><circle cx="353.4" cy="454.8" r="1.1"/><circle cx="357.5" cy="396.5" r="1.1"/><circle cx="361.6" cy="356.1" r="1.1"/><circle cx="365.7" cy="404.5" r="1.1"/><circle cx="369.9" cy="389.6" r="1.1"/><circle cx="374.0" cy="405.5" r="1.1"/><circle cx="378.1" cy="362.3" r="1.1"/><circle cx="382.2" cy="396.7" r="1.1"/><circle cx="386.4" cy="338.8" r="1.1"/><circle cx="390.5" cy="366.0" r="1.1"/><circle cx="394.6" cy="432.5" r="1.1"/><circle cx="398.7" cy="395.2" r="1.1"/><circle cx="402.9" cy="375.7" r="1.1"/><circle cx="407.0" cy="370.5" r="1.1"/><circle cx="411.1" cy="393.4" r="1.1"/><circle cx="415.2" cy="407.9" r="1.1"/><circle cx="419.4" cy="376.0" r="1.1"/><circle cx="423.5" cy="425.0" r="1.1"/><circle cx="427.6" cy="411.4" r="1.1"/><circle cx="431.7" cy="364.1" r="1.1"/><circle cx="435.9" cy="368.2" r="1.1"/><circle cx="440.0" cy="407.7" r="1.1"/><circle cx="444.1" cy="424.5" r="1.1"/><circle cx="448.2" cy="391.5" r="1.1"/><circle cx="452.4" cy="416.7" r="1.1"/><circle cx="456.5" cy="367.3" r="1.1"/><circle cx="460.6" cy="371.6" r="1.1"/><circle cx="464.7" cy="447.9" r="1.1"/><circle cx="468.9" cy="366.0" r="1.1"/><circle cx="473.0" cy="381.6" r="1.1"/><circle cx="477.1" cy="339.9" r="1.1"/><circle cx="481.2" cy="379.8" r="1.1"/><circle cx="485.4" cy="394.3" r="1.1"/><circle cx="489.5" cy="379.0" r="1.1"/><circle cx="493.6" cy="375.7" r="1.1"/><circle cx="497.7" cy="407.7" r="1.1"/><circle cx="501.9" cy="350.5" r="1.1"/><circle cx="506.0" cy="386.9" r="1.1"/><circle cx="510.1" cy="381.3" r="1.1"/><circle cx="514.2" cy="372.0" r="1.1"/><circle cx="518.4" cy="387.8" r="1.1"/><circle cx="522.5" cy="408.3" r="1.1"/><circle cx="526.6" cy="402.1" r="1.1"/><circle cx="530.7" cy="389.6" r="1.1"/><circle cx="534.9" cy="420.8" r="1.1"/><circle cx="539.0" cy="388.7" r="1.1"/><circle cx="543.1" cy="397.1" r="1.1"/><circle cx="547.2" cy="392.8" r="1.1"/><circle cx="551.4" cy="400.3" r="1.1"/><circle cx="555.5" cy="434.3" r="1.1"/><circle cx="559.6" cy="354.8" r="1.1"/><circle cx="563.7" cy="379.4" r="1.1"/><circle cx="567.9" cy="390.6" r="1.1"/><circle cx="572.0" cy="420.8" r="1.1"/><circle cx="576.1" cy="412.9" r="1.1"/><circle cx="580.2" cy="396.5" r="1.1"/><circle cx="584.4" cy="386.9" r="1.1"/><circle cx="588.5" cy="399.9" r="1.1"/><circle cx="592.6" cy="406.4" r="1.1"/><circle cx="596.7" cy="405.1" r="1.1"/><circle cx="600.9" cy="365.4" r="1.1"/><circle cx="605.0" cy="321.3" r="1.1"/><circle cx="609.1" cy="372.9" r="1.1"/><circle cx="613.2" cy="390.6" r="1.1"/><circle cx="617.4" cy="407.3" r="1.1"/><circle cx="621.5" cy="407.7" r="1.1"/><circle cx="625.6" cy="409.6" r="1.1"/><circle cx="629.7" cy="378.5" r="1.1"/><circle cx="633.9" cy="400.3" r="1.1"/><circle cx="638.0" cy="399.9" r="1.1"/><circle cx="642.1" cy="383.1" r="1.1"/><circle cx="646.2" cy="358.0" r="1.1"/><circle cx="650.4" cy="393.4" r="1.1"/><circle cx="654.5" cy="353.7" r="1.1"/><circle cx="658.6" cy="385.9" r="1.1"/><circle cx="662.7" cy="399.9" r="1.1"/><circle cx="666.9" cy="377.2" r="1.1"/><circle cx="671.0" cy="381.6" r="1.1"/><circle cx="675.1" cy="391.5" r="1.1"/><circle cx="679.2" cy="376.6" r="1.1"/><circle cx="683.4" cy="366.7" r="1.1"/><circle cx="687.5" cy="358.0" r="1.1"/><circle cx="691.6" cy="376.0" r="1.1"/><circle cx="695.7" cy="369.7" r="1.1"/><circle cx="699.9" cy="378.5" r="1.1"/><circle cx="704.0" cy="372.0" r="1.1"/><circle cx="708.1" cy="380.9" r="1.1"/><circle cx="712.2" cy="400.8" r="1.1"/><circle cx="716.4" cy="393.4" r="1.1"/><circle cx="720.5" cy="347.4" r="1.1"/><circle cx="724.6" cy="411.4" r="1.1"/><circle cx="728.7" cy="412.4" r="1.1"/><circle cx="732.9" cy="371.6" r="1.1"/><circle cx="737.0" cy="357.4" r="1.1"/><circle cx="741.1" cy="350.5" r="1.1"/><circle cx="745.2" cy="382.8" r="1.1"/><circle cx="749.4" cy="386.5" r="1.1"/><circle cx="753.5" cy="395.8" r="1.1"/><circle cx="757.6" cy="409.2" r="1.1"/><circle cx="761.7" cy="385.0" r="1.1"/><circle cx="765.9" cy="321.3" r="1.1"/><circle cx="770.0" cy="422.6" r="1.1"/><circle cx="774.1" cy="393.9" r="1.1"/><circle cx="778.2" cy="333.2" r="1.1"/><circle cx="782.4" cy="369.2" r="1.1"/><circle cx="786.5" cy="409.2" r="1.1"/><circle cx="790.6" cy="425.6" r="1.1"/><circle cx="794.7" cy="385.4" r="1.1"/><circle cx="798.9" cy="396.2" r="1.1"/><circle cx="803.0" cy="402.1" r="1.1"/><circle cx="807.1" cy="379.8" r="1.1"/><circle cx="811.2" cy="394.7" r="1.1"/><circle cx="815.4" cy="415.2" r="1.1"/><circle cx="819.5" cy="430.1" r="1.1"/><circle cx="823.6" cy="421.3" r="1.1"/><circle cx="827.7" cy="405.5" r="1.1"/><circle cx="831.9" cy="399.0" r="1.1"/><circle cx="836.0" cy="359.8" r="1.1"/><circle cx="840.1" cy="434.3" r="1.1"/><circle cx="844.2" cy="390.6" r="1.1"/><circle cx="848.4" cy="348.1" r="1.1"/><circle cx="852.5" cy="381.3" r="1.1"/><circle cx="856.6" cy="399.9" r="1.1"/><circle cx="860.7" cy="373.8" r="1.1"/><circle cx="864.9" cy="396.2" r="1.1"/><circle cx="869.0" cy="368.2" r="1.1"/><circle cx="873.1" cy="379.4" r="1.1"/><circle cx="877.2" cy="364.5" r="1.1"/><circle cx="881.4" cy="412.9" r="1.1"/><circle cx="885.5" cy="379.4" r="1.1"/><circle cx="889.6" cy="423.7" r="1.1"/><circle cx="893.7" cy="373.8" r="1.1"/><circle cx="897.9" cy="373.8" r="1.1"/><circle cx="902.0" cy="411.4" r="1.1"/><circle cx="906.1" cy="405.5" r="1.1"/><circle cx="910.2" cy="455.8" r="1.1"/><circle cx="914.4" cy="413.3" r="1.1"/><circle cx="918.5" cy="373.8" r="1.1"/><circle cx="922.6" cy="383.1" r="1.1"/><circle cx="926.7" cy="390.6" r="1.1"/><circle cx="930.9" cy="399.5" r="1.1"/><circle cx="935.0" cy="419.4" r="1.1"/><circle cx="939.1" cy="383.1" r="1.1"/><circle cx="943.2" cy="373.8" r="1.1"/><circle cx="947.4" cy="379.4" r="1.1"/><circle cx="951.5" cy="415.7" r="1.1"/><circle cx="955.6" cy="383.1" r="1.1"/><circle cx="959.7" cy="404.5" r="1.1"/><circle cx="963.9" cy="425.6" r="1.1"/><circle cx="968.0" cy="399.5" r="1.1"/><circle cx="972.1" cy="379.4" r="1.1"/><circle cx="976.2" cy="295.2" r="1.1"/><circle cx="980.4" cy="373.8" r="1.1"/><circle cx="984.5" cy="383.1" r="1.1"/><circle cx="988.6" cy="394.3" r="1.1"/><circle cx="992.7" cy="373.8" r="1.1"/><circle cx="996.9" cy="379.4" r="1.1"/><circle cx="1001.0" cy="383.1" r="1.1"/><circle cx="1005.1" cy="396.2" r="1.1"/><circle cx="1009.2" cy="412.0" r="1.1"/><circle cx="1013.4" cy="383.1" r="1.1"/><circle cx="1017.5" cy="379.4" r="1.1"/><circle cx="1021.6" cy="373.8" r="1.1"/><circle cx="1025.7" cy="397.1" r="1.1"/><circle cx="1029.8" cy="379.4" r="1.1"/><circle cx="1034.0" cy="383.1" r="1.1"/><circle cx="1038.1" cy="373.8" r="1.1"/><circle cx="1042.2" cy="383.1" r="1.1"/><circle cx="1046.3" cy="379.4" r="1.1"/><circle cx="1050.5" cy="431.9" r="1.1"/><circle cx="1054.6" cy="373.8" r="1.1"/><circle cx="1058.7" cy="379.4" r="1.1"/><circle cx="1062.8" cy="383.1" r="1.1"/><circle cx="1067.0" cy="373.8" r="1.1"/><circle cx="1071.1" cy="383.1" r="1.1"/><circle cx="1075.2" cy="379.4" r="1.1"/><circle cx="1079.3" cy="413.9" r="1.1"/><circle cx="1083.5" cy="375.7" r="1.1"/><circle cx="1087.6" cy="432.5" r="1.1"/><circle cx="1091.7" cy="368.2" r="1.1"/><circle cx="1095.8" cy="366.4" r="1.1"/><circle cx="1100.0" cy="404.0" r="1.1"/><circle cx="1104.1" cy="392.4" r="1.1"/><circle cx="1108.2" cy="381.3" r="1.1"/><circle cx="1112.3" cy="430.1" r="1.1"/><circle cx="1116.5" cy="363.0" r="1.1"/><circle cx="1120.6" cy="380.9" r="1.1"/><circle cx="1124.7" cy="394.7" r="1.1"/><circle cx="1128.8" cy="338.8" r="1.1"/><circle cx="1133.0" cy="405.9" r="1.1"/><circle cx="1137.1" cy="380.9" r="1.1"/><circle cx="1141.2" cy="367.3" r="1.1"/><circle cx="1145.3" cy="405.9" r="1.1"/><circle cx="1149.5" cy="380.9" r="1.1"/><circle cx="1153.6" cy="390.6" r="1.1"/><circle cx="1157.7" cy="316.4" r="1.1"/><circle cx="1161.8" cy="381.6" r="1.1"/><circle cx="1166.0" cy="392.8" r="1.1"/><circle cx="1170.1" cy="404.5" r="1.1"/><circle cx="1174.2" cy="347.4" r="1.1"/><circle cx="1178.3" cy="331.9" r="1.1"/><circle cx="1182.5" cy="446.1" r="1.1"/><circle cx="1186.6" cy="399.9" r="1.1"/><circle cx="1190.7" cy="397.1" r="1.1"/><circle cx="1194.8" cy="420.0" r="1.1"/><circle cx="1199.0" cy="390.9" r="1.1"/><circle cx="1203.1" cy="411.4" r="1.1"/><circle cx="1207.2" cy="392.4" r="1.1"/><circle cx="1211.3" cy="375.7" r="1.1"/><circle cx="1215.5" cy="390.6" r="1.1"/><circle cx="1219.6" cy="408.3" r="1.1"/><circle cx="1223.7" cy="382.8" r="1.1"/><circle cx="1227.8" cy="439.0" r="1.1"/><circle cx="1232.0" cy="401.8" r="1.1"/><circle cx="1236.1" cy="412.6" r="1.1"/><circle cx="1240.2" cy="408.8" r="1.1"/><circle cx="1244.3" cy="369.2" r="1.1"/><circle cx="1248.5" cy="402.7" r="1.1"/><circle cx="1252.6" cy="364.5" r="1.1"/><circle cx="1256.7" cy="438.1" r="1.1"/><circle cx="1260.8" cy="382.2" r="1.1"/><circle cx="1265.0" cy="388.3" r="1.1"/><circle cx="1269.1" cy="445.0" r="1.1"/><circle cx="1273.2" cy="424.1" r="1.1"/><circle cx="1277.3" cy="406.4" r="1.1"/><circle cx="1281.5" cy="372.0" r="1.1"/><circle cx="1285.6" cy="394.7" r="1.1"/><circle cx="1289.7" cy="394.3" r="1.1"/><circle cx="1293.8" cy="422.6" r="1.1"/><circle cx="1298.0" cy="354.8" r="1.1"/><circle cx="1302.1" cy="377.5" r="1.1"/><circle cx="1306.2" cy="396.5" r="1.1"/><circle cx="1310.3" cy="395.8" r="1.1"/><circle cx="1314.5" cy="393.4" r="1.1"/><circle cx="1318.6" cy="351.8" r="1.1"/><circle cx="1322.7" cy="359.3" r="1.1"/><circle cx="1326.8" cy="384.1" r="1.1"/><circle cx="1331.0" cy="321.3" r="1.1"/><circle cx="1335.1" cy="438.1" r="1.1"/><circle cx="1339.2" cy="382.2" r="1.1"/><circle cx="1343.3" cy="416.7" r="1.1"/><circle cx="1347.5" cy="396.5" r="1.1"/><circle cx="1351.6" cy="385.0" r="1.1"/><circle cx="1355.7" cy="393.9" r="1.1"/><circle cx="1359.8" cy="389.6" r="1.1"/><circle cx="1364.0" cy="370.1" r="1.1"/><circle cx="1368.1" cy="393.9" r="1.1"/><circle cx="1372.2" cy="385.9" r="1.1"/><circle cx="1376.3" cy="395.2" r="1.1"/><circle cx="1380.5" cy="433.8" r="1.1"/><circle cx="1384.6" cy="348.1" r="1.1"/><circle cx="1388.7" cy="425.6" r="1.1"/><circle cx="1392.8" cy="401.8" r="1.1"/><circle cx="1397.0" cy="379.0" r="1.1"/><circle cx="1401.1" cy="400.3" r="1.1"/><circle cx="1405.2" cy="406.4" r="1.1"/><circle cx="1409.3" cy="438.7" r="1.1"/><circle cx="1413.5" cy="375.5" r="1.1"/></g>
<path d="M976.2 295.2 V312" stroke="#82acf6" stroke-width="1.6"/>
<circle cx="976.2" cy="295.2" r="7.5" fill="#82acf6" fill-opacity="0.25"/>
<circle cx="976.2" cy="295.2" r="3.2" fill="#fff" stroke="#82acf6" stroke-width="1.4"/>
<circle cx="976.2" cy="423.7" r="7.5" fill="#f59d76" fill-opacity="0.25"/>
<circle cx="976.2" cy="423.7" r="3.2" fill="#fff" stroke="#f59d76" stroke-width="1.4"/>
</svg>
<svg style="left:0;top:0" width="1600" height="600" viewBox="0 0 1600 600">
 <circle cx="237" cy="238" r="5" fill="#5f7085"/>
 <path d="M237 236.6 V241" stroke="#fff" stroke-width="1.5"/><circle cx="237" cy="234.6" r="0.9" fill="#fff"/>
 <path d="M562 235.8 H568 L565 238.8 Z" fill="#2d4767"/>
 <circle cx="1249.4" cy="237.6" r="2.3" fill="#7ba7f4"/>
 <circle cx="1355.6" cy="237.6" r="2.3" fill="#f4956b"/>
 <rect x="1511.3" y="235.5" width="4.3" height="4.3" fill="#d7dbe2"/>
</svg>
<div class="t" style="left:69px;top:287.7px;width:50px;text-align:right;font-size:10px;color:#b9c1cc">1.0</div>
<div class="t" style="left:69px;top:341px;width:50px;text-align:right;font-size:10px;color:#b9c1cc">0.75</div>
<div class="t" style="left:69px;top:394.2px;width:50px;text-align:right;font-size:10px;color:#b9c1cc">0.5</div>
<div class="t" style="left:69px;top:447.5px;width:50px;text-align:right;font-size:10px;color:#b9c1cc">0.25</div>
<div class="t" style="left:69px;top:500.8px;width:50px;text-align:right;font-size:10px;color:#b9c1cc">0.0</div>
<div class="t" style="left:1533px;top:287.7px;font-size:10px;color:#b9c1cc">960</div>
<div class="t" style="left:1533px;top:341px;font-size:10px;color:#b9c1cc">720</div>
<div class="t" style="left:1533px;top:394.2px;font-size:10px;color:#b9c1cc">480</div>
<div class="t" style="left:1533px;top:447.5px;font-size:10px;color:#b9c1cc">240</div>
<div class="t" style="left:1533px;top:500.8px;font-size:10px;color:#b9c1cc">0</div>
<div class="t" style="left:130.0px;top:515px;width:60px;text-align:center;font-size:10px;color:#b9c1cc;letter-spacing:-0.2px">May 19</div>
<div class="t" style="left:229.0px;top:515px;width:60px;text-align:center;font-size:10px;color:#b9c1cc;letter-spacing:-0.2px">May 20</div>
<div class="t" style="left:328.0px;top:515px;width:60px;text-align:center;font-size:10px;color:#b9c1cc;letter-spacing:-0.2px">May 21</div>
<div class="t" style="left:427.0px;top:515px;width:60px;text-align:center;font-size:10px;color:#b9c1cc;letter-spacing:-0.2px">May 22</div>
<div class="t" style="left:526.0px;top:515px;width:60px;text-align:center;font-size:10px;color:#b9c1cc;letter-spacing:-0.2px">May 23</div>
<div class="t" style="left:625.0px;top:515px;width:60px;text-align:center;font-size:10px;color:#b9c1cc;letter-spacing:-0.2px">May 24</div>
<div class="t" style="left:724.0px;top:515px;width:60px;text-align:center;font-size:10px;color:#b9c1cc;letter-spacing:-0.2px">May 25</div>
<div class="t" style="left:823.0px;top:515px;width:60px;text-align:center;font-size:10px;color:#b9c1cc;letter-spacing:-0.2px">May 26</div>
<div class="t" style="left:922.0px;top:515px;width:60px;text-align:center;font-size:10px;color:#b9c1cc;letter-spacing:-0.2px">May 27</div>
<div class="t" style="left:1021.0px;top:515px;width:60px;text-align:center;font-size:10px;color:#b9c1cc;letter-spacing:-0.2px">May 28</div>
<div class="t" style="left:1120.0px;top:515px;width:60px;text-align:center;font-size:10px;color:#b9c1cc;letter-spacing:-0.2px">May 29</div>
<div class="t" style="left:1219.0px;top:515px;width:60px;text-align:center;font-size:10px;color:#b9c1cc;letter-spacing:-0.2px">May 30</div>
<div class="t" style="left:1318.0px;top:515px;width:60px;text-align:center;font-size:10px;color:#b9c1cc;letter-spacing:-0.2px">May 31</div>
<div class="t" style="left:1417.0px;top:515px;width:60px;text-align:center;font-size:10px;color:#b9c1cc;letter-spacing:-0.2px">Jun 1</div>

<div class="t md" style="left:57px;top:395px;width:60px;text-align:center;font-size:11px;color:#2f4b6c;-webkit-text-stroke:0.15px #2f4b6c;transform:rotate(-90deg)">Drift</div>
<div class="t md" style="left:1522px;top:395px;width:80px;text-align:center;font-size:11px;color:#2f4b6c;-webkit-text-stroke:0.15px #2f4b6c;transform:rotate(90deg)">Average Value</div>
<div class="t" style="left:626px;top:532.5px;width:400px;text-align:center;font-size:11.6px;color:#34506f;letter-spacing:-0.08px">May 18, 05:00 pm - Jun 01, 05:00 pm</div>
<!-- tooltip -->
<div class="a" style="left:857.5px;top:311.8px;width:239px;height:83.5px;background:#fff;border:1px solid #e6e9ef;border-radius:4px;box-shadow:0 1px 4px rgba(40,60,90,0.08)"></div>
<svg style="left:0;top:0" width="1600" height="600" viewBox="0 0 1600 600">
 <circle cx="872.2" cy="348.3" r="2.2" fill="#7ba7f4"/>
 <circle cx="872.2" cy="361.6" r="2.2" fill="#f4956b"/>
 <circle cx="872.2" cy="374.8" r="2.2" fill="#e9e9e9"/>
</svg>
<div class="t" style="left:870px;top:324.5px;font-size:10px;color:#2d4767;letter-spacing:0.58px">05/27/22 06:00 AM (America/Los_Angeles)</div>
<div class="t" style="left:889.4px;top:343.3px;font-size:9.5px;color:#2d4767;letter-spacing:0.45px">Drift Value: 0.995008</div>
<div class="t" style="left:889.4px;top:356.7px;font-size:9.5px;color:#2d4767;letter-spacing:0.3px">Average Value: 377.0</div>
<div class="t" style="left:889.4px;top:370px;font-size:9.5px;color:#2d4767;letter-spacing:0.39px">Traffic Count: 1</div>
<div class="a" style="left:68px;top:559px;width:1516px;height:1px;background:#e8ebf2"></div>


<!-- LOWER -->
<div class="t b" style="left:84.9px;top:578.6px;font-size:9.5px;color:#2d4767;letter-spacing:-0.13px">SELECTED BIN</div>
<div class="t" style="left:84.9px;top:599.8px;font-size:12px;color:#2d4767;letter-spacing:0.1px">May 27, 2022 6AM, 1 Hour</div>
<div class="a" style="left:1325px;top:580.2px;width:242.3px;height:29px;border:1px solid #e3e7ee;border-radius:3px"></div>
<div class="t b" style="left:1355.4px;top:590px;font-size:11px;color:#2d4767">Search</div>
<div class="a" style="left:68px;top:630.5px;width:1516px;height:34px;background:#f9fafc;border-top:1px solid #e8ebf2;border-bottom:1px solid #e8ebf2"></div>
<div class="t b" style="left:116.9px;top:642.5px;font-size:8.5px;color:#5a6b80;letter-spacing:-0.18px">FEATURE</div>
<div class="t b" style="left:670px;top:642.5px;font-size:8.5px;color:#5a6b80;letter-spacing:0.1px">PREDICTION DRIFT IMPACT</div>
<div class="t b" style="left:1078.3px;top:642.5px;font-size:8.5px;color:#5a6b80;letter-spacing:-0.07px">FEATURE DRIFT</div>
<div class="t b" style="left:1385.9px;top:642.5px;font-size:8.5px;color:#5a6b80;letter-spacing:0.05px">FEATURE IMPACT</div>
<div class="t" style="left:116.9px;top:677.2px;font-size:11.5px;color:#2d4767">Age</div>
<div class="t" style="left:677px;top:677.2px;width:100px;text-align:center;font-size:11px;color:#2d4767">31.604%</div>
<div class="t" style="left:1060px;top:677.2px;width:100px;text-align:center;font-size:11px;color:#2d4767">0.86</div>
<div class="t" style="left:1372px;top:677.2px;width:100px;text-align:center;font-size:11px;color:#2d4767">29.28%</div>

<div class="t md" style="left:76.7px;top:717.6px;font-size:14px;color:#2f4b6c;letter-spacing:0.09px">Feature Distribution</div>
<div class="a" style="left:76.7px;top:747px;width:739px;height:1px;background:#eef0f4"></div>
<div class="t" style="left:683.2px;top:757px;font-size:12px;color:#2d4767">production</div>
<div class="t" style="left:761px;top:757px;font-size:12px;color:#2d4767">baseline</div>
<div class="t md" style="left:834px;top:717.6px;font-size:14px;color:#2f4b6c;letter-spacing:-0.07px">Average Feature Value Over Time</div>
<div class="t" style="left:1065px;top:718.8px;font-size:11px;color:#b3bcc8">2</div>
<div class="t" style="left:1405.5px;top:718.5px;font-size:11px;color:#2d4767;letter-spacing:-0.1px">Export bin and feature to Analyze</div>
<div class="a" style="left:833px;top:747px;width:743px;height:1px;background:#eef0f4"></div>
<div class="t" style="left:1458.7px;top:757px;font-size:12px;color:#2d4767;letter-spacing:-0.17px">events in time range</div>

<svg style="left:0;top:0" width="1600" height="1020" viewBox="0 0 1600 1020">
 <circle cx="165.9" cy="583.7" r="5" fill="#5f7085"/><path d="M165.9 582.5 V586.7" stroke="#fff" stroke-width="1.5"/><circle cx="165.9" cy="580.5" r="0.9" fill="#fff"/>
 <circle cx="1339.6" cy="593.8" r="4" stroke="#2d4767" stroke-width="1.8" fill="none"/>
 <path d="M1342.5 596.8 L1345.8 600.1" stroke="#2d4767" stroke-width="2" stroke-linecap="round"/>
 <path d="M159.7 645.7 L162 643.1 L164.3 645.7 Z M159.7 647.7 L162 650.3000000000001 L164.3 647.7 Z" fill="#8795a6"/>
 <path d="M790.5 648.5 H797.5 L794 644.7 Z" fill="#5a6b80"/>
 <circle cx="814" cy="646.5" r="5" fill="#b3bcc8"/><path d="M814 645.3 V649.5" stroke="#fff" stroke-width="1.5"/><circle cx="814" cy="643.3" r="0.9" fill="#fff"/>
 <path d="M1149.1000000000001 645.7 L1151.4 643.1 L1153.7 645.7 Z M1149.1000000000001 647.7 L1151.4 650.3000000000001 L1153.7 647.7 Z" fill="#8795a6"/>
 <circle cx="1171.6" cy="646.5" r="5" fill="#b3bcc8"/><path d="M1171.6 645.3 V649.5" stroke="#fff" stroke-width="1.5"/><circle cx="1171.6" cy="643.3" r="0.9" fill="#fff"/>
 <path d="M1464.7 645.7 L1467 643.1 L1469.3 645.7 Z M1464.7 647.7 L1467 650.3000000000001 L1469.3 647.7 Z" fill="#8795a6"/>
 <circle cx="1487.6" cy="646.5" r="5" fill="#b3bcc8"/><path d="M1487.6 645.3 V649.5" stroke="#fff" stroke-width="1.5"/><circle cx="1487.6" cy="643.3" r="0.9" fill="#fff"/>
 <path d="M81.5 680.6 H88.5 L85 684.6 Z" fill="#2d4767"/>
 <circle cx="214" cy="724.5" r="5" fill="#5f7085"/><path d="M214 723.3 V727.5" stroke="#fff" stroke-width="1.5"/><circle cx="214" cy="721.3" r="0.9" fill="#fff"/>
 <circle cx="1055.3" cy="724" r="5" fill="#5f7085"/><path d="M1055.3 722.8 V727" stroke="#fff" stroke-width="1.5"/><circle cx="1055.3" cy="720.8" r="0.9" fill="#fff"/>
 <path d="M1386.5 717 H1393 L1397 721 V731.3 H1386.5 Z M1393 717 V721 H1397" stroke="#2d4767" stroke-width="1.4" fill="none" stroke-linejoin="round"/>
 <path d="M1391.7 729 V722.5 M1389.2 725 L1391.7 722.3 L1394.2 725" stroke="#2d4767" stroke-width="1.4" fill="none"/>
 <rect x="672.8" y="760.4" width="4.4" height="4.4" fill="#7ba7f4"/>
 <rect x="750.8" y="760.4" width="4.4" height="4.4" fill="#f4956b"/>
 <path d="M1447.5 762.8 H1452.5" stroke="#7ba7f4" stroke-width="1.5"/>
</svg>
<svg style="left:0;top:0" width="1600" height="1020" viewBox="0 0 1600 1020"><path d="M132.5 783 H808.3" stroke="#eceff4" stroke-width="1"/>
<path d="M132.5 819.4 H808.3" stroke="#eceff4" stroke-width="1"/>
<path d="M132.5 855.7 H808.3" stroke="#eceff4" stroke-width="1"/>
<path d="M132.5 892 H808.3" stroke="#eceff4" stroke-width="1"/>
<rect x="138.4" y="884" width="65.3" height="8.0" fill="#f8ae92"/>
<rect x="205" y="860.8" width="64.8" height="31.2" fill="#f8ae92"/>
<rect x="271" y="839.8" width="65.9" height="52.2" fill="#f8ae92"/>
<rect x="271" y="805.5" width="65.9" height="34.3" fill="#c4d7fa"/>
<rect x="271" y="839.8" width="65.9" height="52.2" fill="#c2b1c9"/>
<rect x="338" y="865" width="65.0" height="27.0" fill="#f8ae92"/>
<rect x="338" y="863.7" width="65.0" height="1.3" fill="#c4d7fa"/>
<rect x="338" y="865" width="65.0" height="27.0" fill="#c2b1c9"/>
<rect x="404" y="881" width="65.0" height="11.0" fill="#f8ae92"/>
<rect x="470.5" y="884.4" width="65.9" height="7.6" fill="#f8ae92"/>
<rect x="470.5" y="864.2" width="65.9" height="20.2" fill="#c4d7fa"/>
<rect x="470.5" y="884.4" width="65.9" height="7.6" fill="#c2b1c9"/>
<rect x="537" y="889" width="65.0" height="3.0" fill="#f8ae92"/>
<rect x="603" y="890.6" width="66.0" height="1.4" fill="#f8ae92"/>
<rect x="670" y="891.2" width="65.0" height="0.8" fill="#c4d7fa"/>
<rect x="670" y="892" width="65.0" height="0.0" fill="#c2b1c9"/>
<defs><pattern id="dots" width="2" height="2" patternUnits="userSpaceOnUse"><rect width="1" height="1" fill="#a99bb6"/></pattern></defs>
<rect x="272" y="855.5" width="64" height="36.5" fill="url(#dots)" opacity="0.55"/>
<path d="M132.5 892.3 H808.3" stroke="#dde3ee" stroke-width="1"/>
<path d="M151.2 892 V897" stroke="#dde3ee" stroke-width="1"/>
<path d="M247.8 892 V897" stroke="#dde3ee" stroke-width="1"/>
<path d="M344.4 892 V897" stroke="#dde3ee" stroke-width="1"/>
<path d="M441.0 892 V897" stroke="#dde3ee" stroke-width="1"/>
<path d="M537.6 892 V897" stroke="#dde3ee" stroke-width="1"/>
<path d="M634.2 892 V897" stroke="#dde3ee" stroke-width="1"/>
<path d="M730.8 892 V897" stroke="#dde3ee" stroke-width="1"/>
<path d="M876 783 H1567.5" stroke="#eceff4" stroke-width="1"/>
<path d="M876 819.4 H1567.5" stroke="#eceff4" stroke-width="1"/>
<path d="M876 855.7 H1567.5" stroke="#eceff4" stroke-width="1"/>
<path d="M876 892.3 H1567.5 M876 892 V897 M1567.5 892 V897" stroke="#dde3ee" stroke-width="1"/>
<path d="M876 812.2 L1567.5 880.9" stroke="#7ba7f4" stroke-width="1.5"/>
<circle cx="876" cy="812.2" r="3" fill="#7ba7f4"/><circle cx="1567.5" cy="880.9" r="3" fill="#7ba7f4"/></svg>
<div class="t" style="left:80.4px;top:779.5px;width:40px;text-align:right;font-size:9px;color:#5b6571;letter-spacing:0.1px;">75%</div>
<div class="t" style="left:80.4px;top:815.1px;width:40px;text-align:right;font-size:9px;color:#5b6571;letter-spacing:0.1px;">50%</div>
<div class="t" style="left:80.4px;top:851.8px;width:40px;text-align:right;font-size:9px;color:#5b6571;letter-spacing:0.1px;">25%</div>
<div class="t" style="left:80.4px;top:888.5px;width:40px;text-align:right;font-size:9px;color:#5b6571;letter-spacing:0.1px;">0%</div>
<div class="t" style="left:131.2px;top:898.9px;width:40px;text-align:center;font-size:9.5px;color:#5b6571;letter-spacing:0.2px;">20</div>
<div class="t" style="left:227.8px;top:898.9px;width:40px;text-align:center;font-size:9.5px;color:#5b6571;letter-spacing:0.2px;">30</div>
<div class="t" style="left:324.4px;top:898.9px;width:40px;text-align:center;font-size:9.5px;color:#5b6571;letter-spacing:0.2px;">40</div>
<div class="t" style="left:421.0px;top:898.9px;width:40px;text-align:center;font-size:9.5px;color:#5b6571;letter-spacing:0.2px;">50</div>
<div class="t" style="left:517.6px;top:898.9px;width:40px;text-align:center;font-size:9.5px;color:#5b6571;letter-spacing:0.2px;">60</div>
<div class="t" style="left:614.2px;top:898.9px;width:40px;text-align:center;font-size:9.5px;color:#5b6571;letter-spacing:0.2px;">70</div>
<div class="t" style="left:710.8px;top:898.9px;width:40px;text-align:center;font-size:9.5px;color:#5b6571;letter-spacing:0.2px;">80</div>
<div class="t" style="left:440.0px;top:913.0px;width:60px;text-align:center;font-size:10px;color:#5b6571;letter-spacing:0.3px;">Age</div>
<div class="t" style="left:31.4px;top:832.0px;width:120px;text-align:center;font-size:10px;color:#5b6571;letter-spacing:0.2px;transform:rotate(-90deg)">Relative Frequency</div>
<div class="t" style="left:824.5px;top:778.1px;width:40px;text-align:right;font-size:9.5px;color:#5b6571;letter-spacing:0.3px;">60</div>
<div class="t" style="left:824.5px;top:814.2px;width:40px;text-align:right;font-size:9.5px;color:#5b6571;letter-spacing:0.3px;">50</div>
<div class="t" style="left:824.5px;top:851.2px;width:40px;text-align:right;font-size:9.5px;color:#5b6571;letter-spacing:0.3px;">40</div>
<div class="t" style="left:824.5px;top:887.2px;width:40px;text-align:right;font-size:9.5px;color:#5b6571;letter-spacing:0.3px;">30</div>
<div class="t" style="left:845.0px;top:898.5px;width:60px;text-align:center;font-size:9.5px;color:#5b6571;letter-spacing:0.1px;">13:00</div>
<div class="t" style="left:1523.8px;top:898.5px;width:60px;text-align:center;font-size:9.5px;color:#5b6571;letter-spacing:0.1px;">14:00</div>
<div class="t" style="left:1061.3px;top:913.0px;width:320px;text-align:center;font-size:10px;color:#5b6571;letter-spacing:0.64px;">Time(05/27/22 06:00 AM PDT – 05/27/22 07:00 AM PDT)</div>
<div class="t" style="left:812.0px;top:832.5px;width:60px;text-align:center;font-size:10px;color:#5b6571;letter-spacing:0.3px;transform:rotate(-90deg)">Age</div>
<div class="a" style="left:68px;top:941.5px;width:1516px;height:1.5px;background:#e9ecf1"></div>
<div class="a" style="left:68px;top:943px;width:1516px;height:4px;background:linear-gradient(#f3f5f8,#fff)"></div>
<div class="a" style="left:68px;top:980.3px;width:1516px;height:1px;background:#eceff4"></div>
<div class="a" style="left:68px;top:1017.8px;width:1516px;height:1px;background:#eceff4"></div>
<svg style="left:0;top:0" width="1600" height="1020" viewBox="0 0 1600 1020">
 <path d="M83 957.8 L87.3 961.5 L83 965.2 Z" fill="#2d4767"/>
 <path d="M83 995.8 L87.3 999.5 L83 1003.2 Z" fill="#2d4767"/>
</svg>
<div class="t" style="left:116.9px;top:955.5px;font-size:11.5px;color:#2d4767;letter-spacing:0.1px">NumOfProducts</div>
<div class="t" style="left:677px;top:955.5px;width:100px;text-align:center;font-size:11px;color:#2d4767">27.585%</div>
<div class="t" style="left:1060px;top:955.5px;width:100px;text-align:center;font-size:11px;color:#2d4767">0.95</div>
<div class="t" style="left:1372px;top:955.5px;width:100px;text-align:center;font-size:11px;color:#2d4767">23.13%</div>
<div class="t" style="left:116.9px;top:993.8px;font-size:11.5px;color:#2d4767;letter-spacing:0.1px">Balance</div>
<div class="t" style="left:677px;top:993.8px;width:100px;text-align:center;font-size:11px;color:#2d4767">12.283%</div>
<div class="t" style="left:1060px;top:993.8px;width:100px;text-align:center;font-size:11px;color:#2d4767">0.79</div>
<div class="t" style="left:1372px;top:993.8px;width:100px;text-align:center;font-size:11px;color:#2d4767">12.43%</div>

<svg style="left:0;top:0" width="80" height="1020" viewBox="0 0 80 1020">
 <path d="M57.2 507.2 L59.8 510 L57.2 512.8" stroke="#d3d8e2" stroke-width="1.2" fill="none"/>
 <path d="M57.2 833.2 L59.8 836 L57.2 838.8" stroke="#d3d8e2" stroke-width="1.2" fill="none"/>
</svg>
</body></html>
